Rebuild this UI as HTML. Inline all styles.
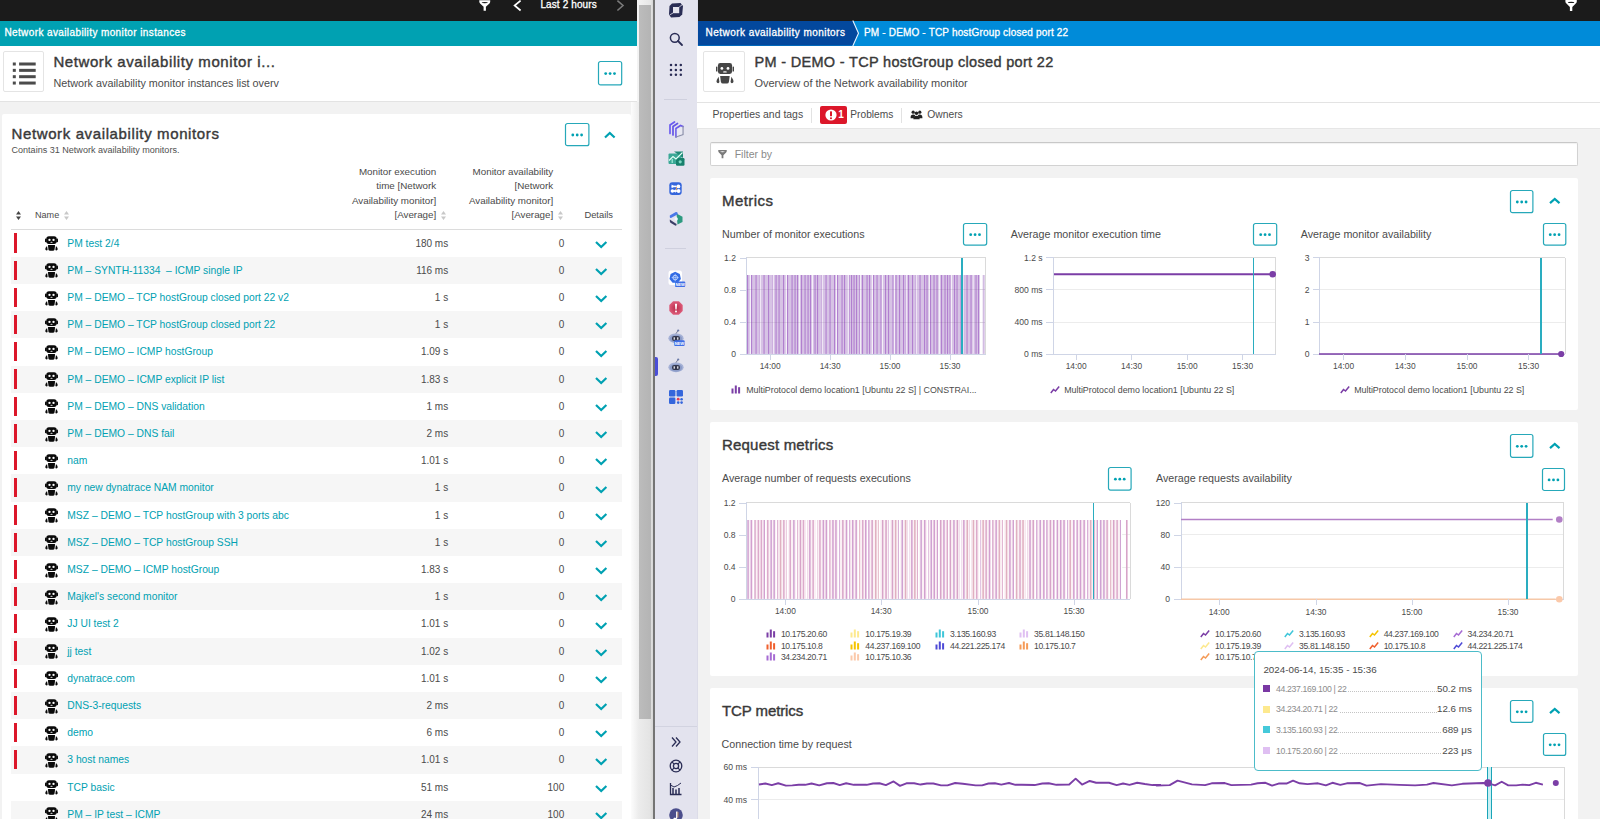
<!DOCTYPE html>
<html><head><meta charset="utf-8"><title>Network availability monitors</title>
<style>
html,body{margin:0;padding:0;}
body{width:1600px;height:819px;overflow:hidden;position:relative;background:#f2f2f2;font-family:"Liberation Sans",sans-serif;}
.t{position:absolute;white-space:nowrap;line-height:20px;height:20px;}
.r{position:absolute;display:block;}
</style></head><body>
<div class="r" style="left:0.00px;top:0.00px;width:637.00px;height:21.00px;background:#1b1b1b"></div>
<svg class="r" style="left:479.00px;top:0.00px;overflow:visible;" width="11.5" height="11" viewBox="0 0 12 11"><path d="M0.3,0 H11.7 V1.4 Q11.7,2.4 10.9,3.3 L7.2,6.9 V11 H4.8 V6.9 L1.1,3.3 Q0.3,2.4 0.3,1.4 Z" fill="#fff"/><ellipse cx="6" cy="2.4" rx="3.3" ry="0.65" fill="#1b1b1b"/></svg>
<svg class="r" style="left:512.50px;top:0.00px;overflow:visible;" width="9" height="11.5" viewBox="0 0 9 11.5"><polyline points="7.6,0.6 1.6,5.5 7.6,10.5" fill="none" stroke="#fff" stroke-width="1.7"/></svg>
<div class="t" style="left:540.40px;top:-4.80px;font-size:10px;color:#fff;font-weight:400;letter-spacing:0.12px;-webkit-text-stroke:0.3px #fff;">Last 2 hours</div>
<svg class="r" style="left:616.00px;top:0.00px;overflow:visible;" width="9" height="11.5" viewBox="0 0 9 11.5"><polyline points="1.4,0.6 7,5.5 1.4,10.5" fill="none" stroke="#7a7a7a" stroke-width="1.6"/></svg>
<div class="r" style="left:0.00px;top:21.00px;width:637.00px;height:24.50px;background:#00a1b2"></div>
<div class="t" style="left:4.40px;top:23.00px;font-size:10px;color:#fff;font-weight:400;letter-spacing:0.39px;-webkit-text-stroke:0.3px #fff;">Network availability monitor instances</div>
<div class="r" style="left:0.00px;top:45.50px;width:637.00px;height:56.00px;background:#fff"></div>
<div class="r" style="left:0.00px;top:101.20px;width:637.00px;height:1.00px;background:#e3e3e3"></div>
<div class="r" style="left:2.50px;top:51.40px;width:41.00px;height:41.10px;background:#fff;border:1px solid #e4e4e4;border-radius:2px;box-sizing:border-box"></div>
<svg class="r" style="left:2.50px;top:51.90px;overflow:visible;" width="41" height="41" viewBox="0 0 41 41"><g fill="#4b4b4b"><rect x="9.80" y="10.50" width="3" height="3"/><rect x="16.10" y="10.50" width="16.6" height="3"/><rect x="9.80" y="16.85" width="3" height="3"/><rect x="16.10" y="16.85" width="16.6" height="3"/><rect x="9.80" y="23.20" width="3" height="3"/><rect x="16.10" y="23.20" width="16.6" height="3"/><rect x="9.80" y="29.55" width="3" height="3"/><rect x="16.10" y="29.55" width="16.6" height="3"/></g></svg>
<div class="t" style="left:53.40px;top:51.60px;font-size:15px;color:#393939;font-weight:400;letter-spacing:0.59px;-webkit-text-stroke:0.4px #393939;">Network availability monitor i...</div>
<div class="t" style="left:53.40px;top:72.60px;font-size:10.8px;color:#4b4b4b;font-weight:400;">Network availability monitor instances list overv</div>
<svg class="r" style="left:598.00px;top:61.20px;overflow:visible;" width="24.2" height="24.4" viewBox="0 0 24.2 24.4"><rect x="0.5" y="0.5" width="23.20" height="23.40" rx="2" fill="#fff" stroke="#26a8b9" stroke-width="1.2"/><circle cx="7.70" cy="12.60" r="1.4" fill="#00a1b2"/><circle cx="12.10" cy="12.60" r="1.4" fill="#00a1b2"/><circle cx="16.50" cy="12.60" r="1.4" fill="#00a1b2"/></svg>
<div class="r" style="left:2.00px;top:114.00px;width:629.30px;height:716.00px;background:#fff;border-radius:2px"></div>
<div class="t" style="left:11.50px;top:124.00px;font-size:15px;color:#393939;font-weight:400;letter-spacing:0.62px;-webkit-text-stroke:0.4px #393939;">Network availability monitors</div>
<div class="t" style="left:11.50px;top:139.90px;font-size:9.05px;color:#505050;font-weight:400;">Contains 31 Network availability monitors.</div>
<svg class="r" style="left:565.20px;top:123.40px;overflow:visible;" width="24.4" height="23.2" viewBox="0 0 24.4 23.2"><rect x="0.5" y="0.5" width="23.40" height="22.20" rx="2" fill="#fff" stroke="#26a8b9" stroke-width="1.2"/><circle cx="7.80" cy="12.00" r="1.4" fill="#00a1b2"/><circle cx="12.20" cy="12.00" r="1.4" fill="#00a1b2"/><circle cx="16.60" cy="12.00" r="1.4" fill="#00a1b2"/></svg>
<svg class="r" style="left:604.00px;top:132.00px;overflow:visible;" width="11.6" height="6.5" viewBox="0 0 11.6 6.5"><polyline points="1,5.5 5.8,1 10.6,5.5" fill="none" stroke="#00a1b2" stroke-width="2.2" /></svg>
<div class="t" style="right:1163.80px;text-align:right;top:162.00px;font-size:9.8px;color:#4a4a4a;font-weight:400;">Monitor execution</div>
<div class="t" style="right:1163.80px;text-align:right;top:176.27px;font-size:9.8px;color:#4a4a4a;font-weight:400;">time [Network</div>
<div class="t" style="right:1163.80px;text-align:right;top:190.54px;font-size:9.8px;color:#4a4a4a;font-weight:400;">Availability monitor]</div>
<div class="t" style="right:1163.80px;text-align:right;top:204.81px;font-size:9.8px;color:#4a4a4a;font-weight:400;">[Average]</div>
<div class="t" style="right:1046.80px;text-align:right;top:162.00px;font-size:9.8px;color:#4a4a4a;font-weight:400;">Monitor availability</div>
<div class="t" style="right:1046.80px;text-align:right;top:176.27px;font-size:9.8px;color:#4a4a4a;font-weight:400;">[Network</div>
<div class="t" style="right:1046.80px;text-align:right;top:190.54px;font-size:9.8px;color:#4a4a4a;font-weight:400;">Availability monitor]</div>
<div class="t" style="right:1046.80px;text-align:right;top:204.81px;font-size:9.8px;color:#4a4a4a;font-weight:400;">[Average]</div>
<div class="t" style="left:584.40px;top:204.80px;font-size:9.4px;color:#4a4a4a;font-weight:400;">Details</div>
<div class="t" style="left:35.00px;top:204.80px;font-size:9.1px;color:#4a4a4a;font-weight:400;">Name</div>
<svg class="r" style="left:16.00px;top:210.50px;overflow:visible;" width="5" height="9" viewBox="0 0 5 9"><path d="M0,3.6 L2.5,0 L5,3.6 Z M0,5.4 L2.5,9 L5,5.4 Z" fill="#454545"/></svg>
<svg class="r" style="left:64.20px;top:210.50px;overflow:visible;" width="5" height="9" viewBox="0 0 5 9"><path d="M0,3.6 L2.5,0 L5,3.6 Z M0,5.4 L2.5,9 L5,5.4 Z" fill="#c8c8c8"/></svg>
<svg class="r" style="left:441.00px;top:210.50px;overflow:visible;" width="5" height="9" viewBox="0 0 5 9"><path d="M0,3.6 L2.5,0 L5,3.6 Z M0,5.4 L2.5,9 L5,5.4 Z" fill="#c8c8c8"/></svg>
<svg class="r" style="left:557.80px;top:210.50px;overflow:visible;" width="5" height="9" viewBox="0 0 5 9"><path d="M0,3.6 L2.5,0 L5,3.6 Z M0,5.4 L2.5,9 L5,5.4 Z" fill="#c8c8c8"/></svg>
<div class="r" style="left:11.00px;top:228.60px;width:610.70px;height:1.00px;background:#dcdcdc"></div>
<div class="r" style="left:14.00px;top:233.40px;width:3.00px;height:19.20px;background:#dc172a"></div>
<svg class="r" style="left:45.10px;top:236.10px;overflow:visible;" width="13" height="15" viewBox="0 0 18 20"><g fill="#0a0a0a"><rect x="1.8" y="0" width="14.4" height="10.6" rx="3.6"/><rect x="0" y="3" width="2.4" height="5.4" rx="1.1"/><rect x="15.6" y="3" width="2.4" height="5.4" rx="1.1"/><circle cx="6.2" cy="5" r="1.6" fill="#fff"/><circle cx="11.8" cy="5" r="1.6" fill="#fff"/><ellipse cx="9" cy="8.3" rx="1.9" ry="0.6" fill="#fff"/><path d="M4.6,12.2 H13.4 Q14,12.2 13.9,13 L13.2,18.2 Q12.9,20 11,20 H7 Q5.1,20 4.8,18.2 L4.1,13 Q4,12.2 4.6,12.2 Z"/><path d="M2.8,13.4 Q0.2,16.2 0.4,18 Q0.7,19.6 2.2,19.6 Q3.6,19.6 3.6,18.2 Z"/><path d="M15.2,13.4 Q17.8,16.2 17.6,18 Q17.3,19.6 15.8,19.6 Q14.4,19.6 14.4,18.2 Z"/></g></svg>
<div class="t" style="left:67.30px;top:233.60px;font-size:10.3px;color:#00a1b2;font-weight:400;">PM test 2/4</div>
<div class="t" style="right:1151.80px;text-align:right;top:233.60px;font-size:10px;color:#4b4b4b;font-weight:400;">180 ms</div>
<div class="t" style="right:1035.80px;text-align:right;top:233.60px;font-size:10px;color:#4b4b4b;font-weight:400;">0</div>
<svg class="r" style="left:594.60px;top:240.70px;overflow:visible;" width="12.4" height="7.5" viewBox="0 0 12.4 7.5"><polyline points="1,1 6.2,6 11.4,1" fill="none" stroke="#00a1b2" stroke-width="2.2" /></svg>
<div class="r" style="left:11.00px;top:256.80px;width:610.70px;height:27.20px;background:#f6f6f6"></div>
<div class="r" style="left:14.00px;top:260.60px;width:3.00px;height:19.20px;background:#dc172a"></div>
<svg class="r" style="left:45.10px;top:263.30px;overflow:visible;" width="13" height="15" viewBox="0 0 18 20"><g fill="#0a0a0a"><rect x="1.8" y="0" width="14.4" height="10.6" rx="3.6"/><rect x="0" y="3" width="2.4" height="5.4" rx="1.1"/><rect x="15.6" y="3" width="2.4" height="5.4" rx="1.1"/><circle cx="6.2" cy="5" r="1.6" fill="#fff"/><circle cx="11.8" cy="5" r="1.6" fill="#fff"/><ellipse cx="9" cy="8.3" rx="1.9" ry="0.6" fill="#fff"/><path d="M4.6,12.2 H13.4 Q14,12.2 13.9,13 L13.2,18.2 Q12.9,20 11,20 H7 Q5.1,20 4.8,18.2 L4.1,13 Q4,12.2 4.6,12.2 Z"/><path d="M2.8,13.4 Q0.2,16.2 0.4,18 Q0.7,19.6 2.2,19.6 Q3.6,19.6 3.6,18.2 Z"/><path d="M15.2,13.4 Q17.8,16.2 17.6,18 Q17.3,19.6 15.8,19.6 Q14.4,19.6 14.4,18.2 Z"/></g></svg>
<div class="t" style="left:67.30px;top:260.80px;font-size:10.3px;color:#00a1b2;font-weight:400;">PM – SYNTH-11334 &nbsp;– ICMP single IP</div>
<div class="t" style="right:1151.80px;text-align:right;top:260.80px;font-size:10px;color:#4b4b4b;font-weight:400;">116 ms</div>
<div class="t" style="right:1035.80px;text-align:right;top:260.80px;font-size:10px;color:#4b4b4b;font-weight:400;">0</div>
<svg class="r" style="left:594.60px;top:267.90px;overflow:visible;" width="12.4" height="7.5" viewBox="0 0 12.4 7.5"><polyline points="1,1 6.2,6 11.4,1" fill="none" stroke="#00a1b2" stroke-width="2.2" /></svg>
<div class="r" style="left:14.00px;top:287.80px;width:3.00px;height:19.20px;background:#dc172a"></div>
<svg class="r" style="left:45.10px;top:290.50px;overflow:visible;" width="13" height="15" viewBox="0 0 18 20"><g fill="#0a0a0a"><rect x="1.8" y="0" width="14.4" height="10.6" rx="3.6"/><rect x="0" y="3" width="2.4" height="5.4" rx="1.1"/><rect x="15.6" y="3" width="2.4" height="5.4" rx="1.1"/><circle cx="6.2" cy="5" r="1.6" fill="#fff"/><circle cx="11.8" cy="5" r="1.6" fill="#fff"/><ellipse cx="9" cy="8.3" rx="1.9" ry="0.6" fill="#fff"/><path d="M4.6,12.2 H13.4 Q14,12.2 13.9,13 L13.2,18.2 Q12.9,20 11,20 H7 Q5.1,20 4.8,18.2 L4.1,13 Q4,12.2 4.6,12.2 Z"/><path d="M2.8,13.4 Q0.2,16.2 0.4,18 Q0.7,19.6 2.2,19.6 Q3.6,19.6 3.6,18.2 Z"/><path d="M15.2,13.4 Q17.8,16.2 17.6,18 Q17.3,19.6 15.8,19.6 Q14.4,19.6 14.4,18.2 Z"/></g></svg>
<div class="t" style="left:67.30px;top:288.00px;font-size:10.3px;color:#00a1b2;font-weight:400;">PM – DEMO – TCP hostGroup closed port 22 v2</div>
<div class="t" style="right:1151.80px;text-align:right;top:288.00px;font-size:10px;color:#4b4b4b;font-weight:400;">1 s</div>
<div class="t" style="right:1035.80px;text-align:right;top:288.00px;font-size:10px;color:#4b4b4b;font-weight:400;">0</div>
<svg class="r" style="left:594.60px;top:295.10px;overflow:visible;" width="12.4" height="7.5" viewBox="0 0 12.4 7.5"><polyline points="1,1 6.2,6 11.4,1" fill="none" stroke="#00a1b2" stroke-width="2.2" /></svg>
<div class="r" style="left:11.00px;top:311.20px;width:610.70px;height:27.20px;background:#f6f6f6"></div>
<div class="r" style="left:14.00px;top:315.00px;width:3.00px;height:19.20px;background:#dc172a"></div>
<svg class="r" style="left:45.10px;top:317.70px;overflow:visible;" width="13" height="15" viewBox="0 0 18 20"><g fill="#0a0a0a"><rect x="1.8" y="0" width="14.4" height="10.6" rx="3.6"/><rect x="0" y="3" width="2.4" height="5.4" rx="1.1"/><rect x="15.6" y="3" width="2.4" height="5.4" rx="1.1"/><circle cx="6.2" cy="5" r="1.6" fill="#fff"/><circle cx="11.8" cy="5" r="1.6" fill="#fff"/><ellipse cx="9" cy="8.3" rx="1.9" ry="0.6" fill="#fff"/><path d="M4.6,12.2 H13.4 Q14,12.2 13.9,13 L13.2,18.2 Q12.9,20 11,20 H7 Q5.1,20 4.8,18.2 L4.1,13 Q4,12.2 4.6,12.2 Z"/><path d="M2.8,13.4 Q0.2,16.2 0.4,18 Q0.7,19.6 2.2,19.6 Q3.6,19.6 3.6,18.2 Z"/><path d="M15.2,13.4 Q17.8,16.2 17.6,18 Q17.3,19.6 15.8,19.6 Q14.4,19.6 14.4,18.2 Z"/></g></svg>
<div class="t" style="left:67.30px;top:315.20px;font-size:10.3px;color:#00a1b2;font-weight:400;">PM – DEMO – TCP hostGroup closed port 22</div>
<div class="t" style="right:1151.80px;text-align:right;top:315.20px;font-size:10px;color:#4b4b4b;font-weight:400;">1 s</div>
<div class="t" style="right:1035.80px;text-align:right;top:315.20px;font-size:10px;color:#4b4b4b;font-weight:400;">0</div>
<svg class="r" style="left:594.60px;top:322.30px;overflow:visible;" width="12.4" height="7.5" viewBox="0 0 12.4 7.5"><polyline points="1,1 6.2,6 11.4,1" fill="none" stroke="#00a1b2" stroke-width="2.2" /></svg>
<div class="r" style="left:14.00px;top:342.20px;width:3.00px;height:19.20px;background:#dc172a"></div>
<svg class="r" style="left:45.10px;top:344.90px;overflow:visible;" width="13" height="15" viewBox="0 0 18 20"><g fill="#0a0a0a"><rect x="1.8" y="0" width="14.4" height="10.6" rx="3.6"/><rect x="0" y="3" width="2.4" height="5.4" rx="1.1"/><rect x="15.6" y="3" width="2.4" height="5.4" rx="1.1"/><circle cx="6.2" cy="5" r="1.6" fill="#fff"/><circle cx="11.8" cy="5" r="1.6" fill="#fff"/><ellipse cx="9" cy="8.3" rx="1.9" ry="0.6" fill="#fff"/><path d="M4.6,12.2 H13.4 Q14,12.2 13.9,13 L13.2,18.2 Q12.9,20 11,20 H7 Q5.1,20 4.8,18.2 L4.1,13 Q4,12.2 4.6,12.2 Z"/><path d="M2.8,13.4 Q0.2,16.2 0.4,18 Q0.7,19.6 2.2,19.6 Q3.6,19.6 3.6,18.2 Z"/><path d="M15.2,13.4 Q17.8,16.2 17.6,18 Q17.3,19.6 15.8,19.6 Q14.4,19.6 14.4,18.2 Z"/></g></svg>
<div class="t" style="left:67.30px;top:342.40px;font-size:10.3px;color:#00a1b2;font-weight:400;">PM – DEMO – ICMP hostGroup</div>
<div class="t" style="right:1151.80px;text-align:right;top:342.40px;font-size:10px;color:#4b4b4b;font-weight:400;">1.09 s</div>
<div class="t" style="right:1035.80px;text-align:right;top:342.40px;font-size:10px;color:#4b4b4b;font-weight:400;">0</div>
<svg class="r" style="left:594.60px;top:349.50px;overflow:visible;" width="12.4" height="7.5" viewBox="0 0 12.4 7.5"><polyline points="1,1 6.2,6 11.4,1" fill="none" stroke="#00a1b2" stroke-width="2.2" /></svg>
<div class="r" style="left:11.00px;top:365.60px;width:610.70px;height:27.20px;background:#f6f6f6"></div>
<div class="r" style="left:14.00px;top:369.40px;width:3.00px;height:19.20px;background:#dc172a"></div>
<svg class="r" style="left:45.10px;top:372.10px;overflow:visible;" width="13" height="15" viewBox="0 0 18 20"><g fill="#0a0a0a"><rect x="1.8" y="0" width="14.4" height="10.6" rx="3.6"/><rect x="0" y="3" width="2.4" height="5.4" rx="1.1"/><rect x="15.6" y="3" width="2.4" height="5.4" rx="1.1"/><circle cx="6.2" cy="5" r="1.6" fill="#fff"/><circle cx="11.8" cy="5" r="1.6" fill="#fff"/><ellipse cx="9" cy="8.3" rx="1.9" ry="0.6" fill="#fff"/><path d="M4.6,12.2 H13.4 Q14,12.2 13.9,13 L13.2,18.2 Q12.9,20 11,20 H7 Q5.1,20 4.8,18.2 L4.1,13 Q4,12.2 4.6,12.2 Z"/><path d="M2.8,13.4 Q0.2,16.2 0.4,18 Q0.7,19.6 2.2,19.6 Q3.6,19.6 3.6,18.2 Z"/><path d="M15.2,13.4 Q17.8,16.2 17.6,18 Q17.3,19.6 15.8,19.6 Q14.4,19.6 14.4,18.2 Z"/></g></svg>
<div class="t" style="left:67.30px;top:369.60px;font-size:10.3px;color:#00a1b2;font-weight:400;">PM – DEMO – ICMP explicit IP list</div>
<div class="t" style="right:1151.80px;text-align:right;top:369.60px;font-size:10px;color:#4b4b4b;font-weight:400;">1.83 s</div>
<div class="t" style="right:1035.80px;text-align:right;top:369.60px;font-size:10px;color:#4b4b4b;font-weight:400;">0</div>
<svg class="r" style="left:594.60px;top:376.70px;overflow:visible;" width="12.4" height="7.5" viewBox="0 0 12.4 7.5"><polyline points="1,1 6.2,6 11.4,1" fill="none" stroke="#00a1b2" stroke-width="2.2" /></svg>
<div class="r" style="left:14.00px;top:396.60px;width:3.00px;height:19.20px;background:#dc172a"></div>
<svg class="r" style="left:45.10px;top:399.30px;overflow:visible;" width="13" height="15" viewBox="0 0 18 20"><g fill="#0a0a0a"><rect x="1.8" y="0" width="14.4" height="10.6" rx="3.6"/><rect x="0" y="3" width="2.4" height="5.4" rx="1.1"/><rect x="15.6" y="3" width="2.4" height="5.4" rx="1.1"/><circle cx="6.2" cy="5" r="1.6" fill="#fff"/><circle cx="11.8" cy="5" r="1.6" fill="#fff"/><ellipse cx="9" cy="8.3" rx="1.9" ry="0.6" fill="#fff"/><path d="M4.6,12.2 H13.4 Q14,12.2 13.9,13 L13.2,18.2 Q12.9,20 11,20 H7 Q5.1,20 4.8,18.2 L4.1,13 Q4,12.2 4.6,12.2 Z"/><path d="M2.8,13.4 Q0.2,16.2 0.4,18 Q0.7,19.6 2.2,19.6 Q3.6,19.6 3.6,18.2 Z"/><path d="M15.2,13.4 Q17.8,16.2 17.6,18 Q17.3,19.6 15.8,19.6 Q14.4,19.6 14.4,18.2 Z"/></g></svg>
<div class="t" style="left:67.30px;top:396.80px;font-size:10.3px;color:#00a1b2;font-weight:400;">PM – DEMO – DNS validation</div>
<div class="t" style="right:1151.80px;text-align:right;top:396.80px;font-size:10px;color:#4b4b4b;font-weight:400;">1 ms</div>
<div class="t" style="right:1035.80px;text-align:right;top:396.80px;font-size:10px;color:#4b4b4b;font-weight:400;">0</div>
<svg class="r" style="left:594.60px;top:403.90px;overflow:visible;" width="12.4" height="7.5" viewBox="0 0 12.4 7.5"><polyline points="1,1 6.2,6 11.4,1" fill="none" stroke="#00a1b2" stroke-width="2.2" /></svg>
<div class="r" style="left:11.00px;top:420.00px;width:610.70px;height:27.20px;background:#f6f6f6"></div>
<div class="r" style="left:14.00px;top:423.80px;width:3.00px;height:19.20px;background:#dc172a"></div>
<svg class="r" style="left:45.10px;top:426.50px;overflow:visible;" width="13" height="15" viewBox="0 0 18 20"><g fill="#0a0a0a"><rect x="1.8" y="0" width="14.4" height="10.6" rx="3.6"/><rect x="0" y="3" width="2.4" height="5.4" rx="1.1"/><rect x="15.6" y="3" width="2.4" height="5.4" rx="1.1"/><circle cx="6.2" cy="5" r="1.6" fill="#fff"/><circle cx="11.8" cy="5" r="1.6" fill="#fff"/><ellipse cx="9" cy="8.3" rx="1.9" ry="0.6" fill="#fff"/><path d="M4.6,12.2 H13.4 Q14,12.2 13.9,13 L13.2,18.2 Q12.9,20 11,20 H7 Q5.1,20 4.8,18.2 L4.1,13 Q4,12.2 4.6,12.2 Z"/><path d="M2.8,13.4 Q0.2,16.2 0.4,18 Q0.7,19.6 2.2,19.6 Q3.6,19.6 3.6,18.2 Z"/><path d="M15.2,13.4 Q17.8,16.2 17.6,18 Q17.3,19.6 15.8,19.6 Q14.4,19.6 14.4,18.2 Z"/></g></svg>
<div class="t" style="left:67.30px;top:424.00px;font-size:10.3px;color:#00a1b2;font-weight:400;">PM – DEMO – DNS fail</div>
<div class="t" style="right:1151.80px;text-align:right;top:424.00px;font-size:10px;color:#4b4b4b;font-weight:400;">2 ms</div>
<div class="t" style="right:1035.80px;text-align:right;top:424.00px;font-size:10px;color:#4b4b4b;font-weight:400;">0</div>
<svg class="r" style="left:594.60px;top:431.10px;overflow:visible;" width="12.4" height="7.5" viewBox="0 0 12.4 7.5"><polyline points="1,1 6.2,6 11.4,1" fill="none" stroke="#00a1b2" stroke-width="2.2" /></svg>
<div class="r" style="left:14.00px;top:451.00px;width:3.00px;height:19.20px;background:#dc172a"></div>
<svg class="r" style="left:45.10px;top:453.70px;overflow:visible;" width="13" height="15" viewBox="0 0 18 20"><g fill="#0a0a0a"><rect x="1.8" y="0" width="14.4" height="10.6" rx="3.6"/><rect x="0" y="3" width="2.4" height="5.4" rx="1.1"/><rect x="15.6" y="3" width="2.4" height="5.4" rx="1.1"/><circle cx="6.2" cy="5" r="1.6" fill="#fff"/><circle cx="11.8" cy="5" r="1.6" fill="#fff"/><ellipse cx="9" cy="8.3" rx="1.9" ry="0.6" fill="#fff"/><path d="M4.6,12.2 H13.4 Q14,12.2 13.9,13 L13.2,18.2 Q12.9,20 11,20 H7 Q5.1,20 4.8,18.2 L4.1,13 Q4,12.2 4.6,12.2 Z"/><path d="M2.8,13.4 Q0.2,16.2 0.4,18 Q0.7,19.6 2.2,19.6 Q3.6,19.6 3.6,18.2 Z"/><path d="M15.2,13.4 Q17.8,16.2 17.6,18 Q17.3,19.6 15.8,19.6 Q14.4,19.6 14.4,18.2 Z"/></g></svg>
<div class="t" style="left:67.30px;top:451.20px;font-size:10.3px;color:#00a1b2;font-weight:400;">nam</div>
<div class="t" style="right:1151.80px;text-align:right;top:451.20px;font-size:10px;color:#4b4b4b;font-weight:400;">1.01 s</div>
<div class="t" style="right:1035.80px;text-align:right;top:451.20px;font-size:10px;color:#4b4b4b;font-weight:400;">0</div>
<svg class="r" style="left:594.60px;top:458.30px;overflow:visible;" width="12.4" height="7.5" viewBox="0 0 12.4 7.5"><polyline points="1,1 6.2,6 11.4,1" fill="none" stroke="#00a1b2" stroke-width="2.2" /></svg>
<div class="r" style="left:11.00px;top:474.40px;width:610.70px;height:27.20px;background:#f6f6f6"></div>
<div class="r" style="left:14.00px;top:478.20px;width:3.00px;height:19.20px;background:#dc172a"></div>
<svg class="r" style="left:45.10px;top:480.90px;overflow:visible;" width="13" height="15" viewBox="0 0 18 20"><g fill="#0a0a0a"><rect x="1.8" y="0" width="14.4" height="10.6" rx="3.6"/><rect x="0" y="3" width="2.4" height="5.4" rx="1.1"/><rect x="15.6" y="3" width="2.4" height="5.4" rx="1.1"/><circle cx="6.2" cy="5" r="1.6" fill="#fff"/><circle cx="11.8" cy="5" r="1.6" fill="#fff"/><ellipse cx="9" cy="8.3" rx="1.9" ry="0.6" fill="#fff"/><path d="M4.6,12.2 H13.4 Q14,12.2 13.9,13 L13.2,18.2 Q12.9,20 11,20 H7 Q5.1,20 4.8,18.2 L4.1,13 Q4,12.2 4.6,12.2 Z"/><path d="M2.8,13.4 Q0.2,16.2 0.4,18 Q0.7,19.6 2.2,19.6 Q3.6,19.6 3.6,18.2 Z"/><path d="M15.2,13.4 Q17.8,16.2 17.6,18 Q17.3,19.6 15.8,19.6 Q14.4,19.6 14.4,18.2 Z"/></g></svg>
<div class="t" style="left:67.30px;top:478.40px;font-size:10.3px;color:#00a1b2;font-weight:400;">my new dynatrace NAM monitor</div>
<div class="t" style="right:1151.80px;text-align:right;top:478.40px;font-size:10px;color:#4b4b4b;font-weight:400;">1 s</div>
<div class="t" style="right:1035.80px;text-align:right;top:478.40px;font-size:10px;color:#4b4b4b;font-weight:400;">0</div>
<svg class="r" style="left:594.60px;top:485.50px;overflow:visible;" width="12.4" height="7.5" viewBox="0 0 12.4 7.5"><polyline points="1,1 6.2,6 11.4,1" fill="none" stroke="#00a1b2" stroke-width="2.2" /></svg>
<div class="r" style="left:14.00px;top:505.40px;width:3.00px;height:19.20px;background:#dc172a"></div>
<svg class="r" style="left:45.10px;top:508.10px;overflow:visible;" width="13" height="15" viewBox="0 0 18 20"><g fill="#0a0a0a"><rect x="1.8" y="0" width="14.4" height="10.6" rx="3.6"/><rect x="0" y="3" width="2.4" height="5.4" rx="1.1"/><rect x="15.6" y="3" width="2.4" height="5.4" rx="1.1"/><circle cx="6.2" cy="5" r="1.6" fill="#fff"/><circle cx="11.8" cy="5" r="1.6" fill="#fff"/><ellipse cx="9" cy="8.3" rx="1.9" ry="0.6" fill="#fff"/><path d="M4.6,12.2 H13.4 Q14,12.2 13.9,13 L13.2,18.2 Q12.9,20 11,20 H7 Q5.1,20 4.8,18.2 L4.1,13 Q4,12.2 4.6,12.2 Z"/><path d="M2.8,13.4 Q0.2,16.2 0.4,18 Q0.7,19.6 2.2,19.6 Q3.6,19.6 3.6,18.2 Z"/><path d="M15.2,13.4 Q17.8,16.2 17.6,18 Q17.3,19.6 15.8,19.6 Q14.4,19.6 14.4,18.2 Z"/></g></svg>
<div class="t" style="left:67.30px;top:505.60px;font-size:10.3px;color:#00a1b2;font-weight:400;">MSZ – DEMO – TCP hostGroup with 3 ports abc</div>
<div class="t" style="right:1151.80px;text-align:right;top:505.60px;font-size:10px;color:#4b4b4b;font-weight:400;">1 s</div>
<div class="t" style="right:1035.80px;text-align:right;top:505.60px;font-size:10px;color:#4b4b4b;font-weight:400;">0</div>
<svg class="r" style="left:594.60px;top:512.70px;overflow:visible;" width="12.4" height="7.5" viewBox="0 0 12.4 7.5"><polyline points="1,1 6.2,6 11.4,1" fill="none" stroke="#00a1b2" stroke-width="2.2" /></svg>
<div class="r" style="left:11.00px;top:528.80px;width:610.70px;height:27.20px;background:#f6f6f6"></div>
<div class="r" style="left:14.00px;top:532.60px;width:3.00px;height:19.20px;background:#dc172a"></div>
<svg class="r" style="left:45.10px;top:535.30px;overflow:visible;" width="13" height="15" viewBox="0 0 18 20"><g fill="#0a0a0a"><rect x="1.8" y="0" width="14.4" height="10.6" rx="3.6"/><rect x="0" y="3" width="2.4" height="5.4" rx="1.1"/><rect x="15.6" y="3" width="2.4" height="5.4" rx="1.1"/><circle cx="6.2" cy="5" r="1.6" fill="#fff"/><circle cx="11.8" cy="5" r="1.6" fill="#fff"/><ellipse cx="9" cy="8.3" rx="1.9" ry="0.6" fill="#fff"/><path d="M4.6,12.2 H13.4 Q14,12.2 13.9,13 L13.2,18.2 Q12.9,20 11,20 H7 Q5.1,20 4.8,18.2 L4.1,13 Q4,12.2 4.6,12.2 Z"/><path d="M2.8,13.4 Q0.2,16.2 0.4,18 Q0.7,19.6 2.2,19.6 Q3.6,19.6 3.6,18.2 Z"/><path d="M15.2,13.4 Q17.8,16.2 17.6,18 Q17.3,19.6 15.8,19.6 Q14.4,19.6 14.4,18.2 Z"/></g></svg>
<div class="t" style="left:67.30px;top:532.80px;font-size:10.3px;color:#00a1b2;font-weight:400;">MSZ – DEMO – TCP hostGroup SSH</div>
<div class="t" style="right:1151.80px;text-align:right;top:532.80px;font-size:10px;color:#4b4b4b;font-weight:400;">1 s</div>
<div class="t" style="right:1035.80px;text-align:right;top:532.80px;font-size:10px;color:#4b4b4b;font-weight:400;">0</div>
<svg class="r" style="left:594.60px;top:539.90px;overflow:visible;" width="12.4" height="7.5" viewBox="0 0 12.4 7.5"><polyline points="1,1 6.2,6 11.4,1" fill="none" stroke="#00a1b2" stroke-width="2.2" /></svg>
<div class="r" style="left:14.00px;top:559.80px;width:3.00px;height:19.20px;background:#dc172a"></div>
<svg class="r" style="left:45.10px;top:562.50px;overflow:visible;" width="13" height="15" viewBox="0 0 18 20"><g fill="#0a0a0a"><rect x="1.8" y="0" width="14.4" height="10.6" rx="3.6"/><rect x="0" y="3" width="2.4" height="5.4" rx="1.1"/><rect x="15.6" y="3" width="2.4" height="5.4" rx="1.1"/><circle cx="6.2" cy="5" r="1.6" fill="#fff"/><circle cx="11.8" cy="5" r="1.6" fill="#fff"/><ellipse cx="9" cy="8.3" rx="1.9" ry="0.6" fill="#fff"/><path d="M4.6,12.2 H13.4 Q14,12.2 13.9,13 L13.2,18.2 Q12.9,20 11,20 H7 Q5.1,20 4.8,18.2 L4.1,13 Q4,12.2 4.6,12.2 Z"/><path d="M2.8,13.4 Q0.2,16.2 0.4,18 Q0.7,19.6 2.2,19.6 Q3.6,19.6 3.6,18.2 Z"/><path d="M15.2,13.4 Q17.8,16.2 17.6,18 Q17.3,19.6 15.8,19.6 Q14.4,19.6 14.4,18.2 Z"/></g></svg>
<div class="t" style="left:67.30px;top:560.00px;font-size:10.3px;color:#00a1b2;font-weight:400;">MSZ – DEMO – ICMP hostGroup</div>
<div class="t" style="right:1151.80px;text-align:right;top:560.00px;font-size:10px;color:#4b4b4b;font-weight:400;">1.83 s</div>
<div class="t" style="right:1035.80px;text-align:right;top:560.00px;font-size:10px;color:#4b4b4b;font-weight:400;">0</div>
<svg class="r" style="left:594.60px;top:567.10px;overflow:visible;" width="12.4" height="7.5" viewBox="0 0 12.4 7.5"><polyline points="1,1 6.2,6 11.4,1" fill="none" stroke="#00a1b2" stroke-width="2.2" /></svg>
<div class="r" style="left:11.00px;top:583.20px;width:610.70px;height:27.20px;background:#f6f6f6"></div>
<div class="r" style="left:14.00px;top:587.00px;width:3.00px;height:19.20px;background:#dc172a"></div>
<svg class="r" style="left:45.10px;top:589.70px;overflow:visible;" width="13" height="15" viewBox="0 0 18 20"><g fill="#0a0a0a"><rect x="1.8" y="0" width="14.4" height="10.6" rx="3.6"/><rect x="0" y="3" width="2.4" height="5.4" rx="1.1"/><rect x="15.6" y="3" width="2.4" height="5.4" rx="1.1"/><circle cx="6.2" cy="5" r="1.6" fill="#fff"/><circle cx="11.8" cy="5" r="1.6" fill="#fff"/><ellipse cx="9" cy="8.3" rx="1.9" ry="0.6" fill="#fff"/><path d="M4.6,12.2 H13.4 Q14,12.2 13.9,13 L13.2,18.2 Q12.9,20 11,20 H7 Q5.1,20 4.8,18.2 L4.1,13 Q4,12.2 4.6,12.2 Z"/><path d="M2.8,13.4 Q0.2,16.2 0.4,18 Q0.7,19.6 2.2,19.6 Q3.6,19.6 3.6,18.2 Z"/><path d="M15.2,13.4 Q17.8,16.2 17.6,18 Q17.3,19.6 15.8,19.6 Q14.4,19.6 14.4,18.2 Z"/></g></svg>
<div class="t" style="left:67.30px;top:587.20px;font-size:10.3px;color:#00a1b2;font-weight:400;">Majkel's second monitor</div>
<div class="t" style="right:1151.80px;text-align:right;top:587.20px;font-size:10px;color:#4b4b4b;font-weight:400;">1 s</div>
<div class="t" style="right:1035.80px;text-align:right;top:587.20px;font-size:10px;color:#4b4b4b;font-weight:400;">0</div>
<svg class="r" style="left:594.60px;top:594.30px;overflow:visible;" width="12.4" height="7.5" viewBox="0 0 12.4 7.5"><polyline points="1,1 6.2,6 11.4,1" fill="none" stroke="#00a1b2" stroke-width="2.2" /></svg>
<div class="r" style="left:14.00px;top:614.20px;width:3.00px;height:19.20px;background:#dc172a"></div>
<svg class="r" style="left:45.10px;top:616.90px;overflow:visible;" width="13" height="15" viewBox="0 0 18 20"><g fill="#0a0a0a"><rect x="1.8" y="0" width="14.4" height="10.6" rx="3.6"/><rect x="0" y="3" width="2.4" height="5.4" rx="1.1"/><rect x="15.6" y="3" width="2.4" height="5.4" rx="1.1"/><circle cx="6.2" cy="5" r="1.6" fill="#fff"/><circle cx="11.8" cy="5" r="1.6" fill="#fff"/><ellipse cx="9" cy="8.3" rx="1.9" ry="0.6" fill="#fff"/><path d="M4.6,12.2 H13.4 Q14,12.2 13.9,13 L13.2,18.2 Q12.9,20 11,20 H7 Q5.1,20 4.8,18.2 L4.1,13 Q4,12.2 4.6,12.2 Z"/><path d="M2.8,13.4 Q0.2,16.2 0.4,18 Q0.7,19.6 2.2,19.6 Q3.6,19.6 3.6,18.2 Z"/><path d="M15.2,13.4 Q17.8,16.2 17.6,18 Q17.3,19.6 15.8,19.6 Q14.4,19.6 14.4,18.2 Z"/></g></svg>
<div class="t" style="left:67.30px;top:614.40px;font-size:10.3px;color:#00a1b2;font-weight:400;">JJ UI test 2</div>
<div class="t" style="right:1151.80px;text-align:right;top:614.40px;font-size:10px;color:#4b4b4b;font-weight:400;">1.01 s</div>
<div class="t" style="right:1035.80px;text-align:right;top:614.40px;font-size:10px;color:#4b4b4b;font-weight:400;">0</div>
<svg class="r" style="left:594.60px;top:621.50px;overflow:visible;" width="12.4" height="7.5" viewBox="0 0 12.4 7.5"><polyline points="1,1 6.2,6 11.4,1" fill="none" stroke="#00a1b2" stroke-width="2.2" /></svg>
<div class="r" style="left:11.00px;top:637.60px;width:610.70px;height:27.20px;background:#f6f6f6"></div>
<div class="r" style="left:14.00px;top:641.40px;width:3.00px;height:19.20px;background:#dc172a"></div>
<svg class="r" style="left:45.10px;top:644.10px;overflow:visible;" width="13" height="15" viewBox="0 0 18 20"><g fill="#0a0a0a"><rect x="1.8" y="0" width="14.4" height="10.6" rx="3.6"/><rect x="0" y="3" width="2.4" height="5.4" rx="1.1"/><rect x="15.6" y="3" width="2.4" height="5.4" rx="1.1"/><circle cx="6.2" cy="5" r="1.6" fill="#fff"/><circle cx="11.8" cy="5" r="1.6" fill="#fff"/><ellipse cx="9" cy="8.3" rx="1.9" ry="0.6" fill="#fff"/><path d="M4.6,12.2 H13.4 Q14,12.2 13.9,13 L13.2,18.2 Q12.9,20 11,20 H7 Q5.1,20 4.8,18.2 L4.1,13 Q4,12.2 4.6,12.2 Z"/><path d="M2.8,13.4 Q0.2,16.2 0.4,18 Q0.7,19.6 2.2,19.6 Q3.6,19.6 3.6,18.2 Z"/><path d="M15.2,13.4 Q17.8,16.2 17.6,18 Q17.3,19.6 15.8,19.6 Q14.4,19.6 14.4,18.2 Z"/></g></svg>
<div class="t" style="left:67.30px;top:641.60px;font-size:10.3px;color:#00a1b2;font-weight:400;">jj test</div>
<div class="t" style="right:1151.80px;text-align:right;top:641.60px;font-size:10px;color:#4b4b4b;font-weight:400;">1.02 s</div>
<div class="t" style="right:1035.80px;text-align:right;top:641.60px;font-size:10px;color:#4b4b4b;font-weight:400;">0</div>
<svg class="r" style="left:594.60px;top:648.70px;overflow:visible;" width="12.4" height="7.5" viewBox="0 0 12.4 7.5"><polyline points="1,1 6.2,6 11.4,1" fill="none" stroke="#00a1b2" stroke-width="2.2" /></svg>
<div class="r" style="left:14.00px;top:668.60px;width:3.00px;height:19.20px;background:#dc172a"></div>
<svg class="r" style="left:45.10px;top:671.30px;overflow:visible;" width="13" height="15" viewBox="0 0 18 20"><g fill="#0a0a0a"><rect x="1.8" y="0" width="14.4" height="10.6" rx="3.6"/><rect x="0" y="3" width="2.4" height="5.4" rx="1.1"/><rect x="15.6" y="3" width="2.4" height="5.4" rx="1.1"/><circle cx="6.2" cy="5" r="1.6" fill="#fff"/><circle cx="11.8" cy="5" r="1.6" fill="#fff"/><ellipse cx="9" cy="8.3" rx="1.9" ry="0.6" fill="#fff"/><path d="M4.6,12.2 H13.4 Q14,12.2 13.9,13 L13.2,18.2 Q12.9,20 11,20 H7 Q5.1,20 4.8,18.2 L4.1,13 Q4,12.2 4.6,12.2 Z"/><path d="M2.8,13.4 Q0.2,16.2 0.4,18 Q0.7,19.6 2.2,19.6 Q3.6,19.6 3.6,18.2 Z"/><path d="M15.2,13.4 Q17.8,16.2 17.6,18 Q17.3,19.6 15.8,19.6 Q14.4,19.6 14.4,18.2 Z"/></g></svg>
<div class="t" style="left:67.30px;top:668.80px;font-size:10.3px;color:#00a1b2;font-weight:400;">dynatrace.com</div>
<div class="t" style="right:1151.80px;text-align:right;top:668.80px;font-size:10px;color:#4b4b4b;font-weight:400;">1.01 s</div>
<div class="t" style="right:1035.80px;text-align:right;top:668.80px;font-size:10px;color:#4b4b4b;font-weight:400;">0</div>
<svg class="r" style="left:594.60px;top:675.90px;overflow:visible;" width="12.4" height="7.5" viewBox="0 0 12.4 7.5"><polyline points="1,1 6.2,6 11.4,1" fill="none" stroke="#00a1b2" stroke-width="2.2" /></svg>
<div class="r" style="left:11.00px;top:692.00px;width:610.70px;height:27.20px;background:#f6f6f6"></div>
<div class="r" style="left:14.00px;top:695.80px;width:3.00px;height:19.20px;background:#dc172a"></div>
<svg class="r" style="left:45.10px;top:698.50px;overflow:visible;" width="13" height="15" viewBox="0 0 18 20"><g fill="#0a0a0a"><rect x="1.8" y="0" width="14.4" height="10.6" rx="3.6"/><rect x="0" y="3" width="2.4" height="5.4" rx="1.1"/><rect x="15.6" y="3" width="2.4" height="5.4" rx="1.1"/><circle cx="6.2" cy="5" r="1.6" fill="#fff"/><circle cx="11.8" cy="5" r="1.6" fill="#fff"/><ellipse cx="9" cy="8.3" rx="1.9" ry="0.6" fill="#fff"/><path d="M4.6,12.2 H13.4 Q14,12.2 13.9,13 L13.2,18.2 Q12.9,20 11,20 H7 Q5.1,20 4.8,18.2 L4.1,13 Q4,12.2 4.6,12.2 Z"/><path d="M2.8,13.4 Q0.2,16.2 0.4,18 Q0.7,19.6 2.2,19.6 Q3.6,19.6 3.6,18.2 Z"/><path d="M15.2,13.4 Q17.8,16.2 17.6,18 Q17.3,19.6 15.8,19.6 Q14.4,19.6 14.4,18.2 Z"/></g></svg>
<div class="t" style="left:67.30px;top:696.00px;font-size:10.3px;color:#00a1b2;font-weight:400;">DNS-3-requests</div>
<div class="t" style="right:1151.80px;text-align:right;top:696.00px;font-size:10px;color:#4b4b4b;font-weight:400;">2 ms</div>
<div class="t" style="right:1035.80px;text-align:right;top:696.00px;font-size:10px;color:#4b4b4b;font-weight:400;">0</div>
<svg class="r" style="left:594.60px;top:703.10px;overflow:visible;" width="12.4" height="7.5" viewBox="0 0 12.4 7.5"><polyline points="1,1 6.2,6 11.4,1" fill="none" stroke="#00a1b2" stroke-width="2.2" /></svg>
<div class="r" style="left:14.00px;top:723.00px;width:3.00px;height:19.20px;background:#dc172a"></div>
<svg class="r" style="left:45.10px;top:725.70px;overflow:visible;" width="13" height="15" viewBox="0 0 18 20"><g fill="#0a0a0a"><rect x="1.8" y="0" width="14.4" height="10.6" rx="3.6"/><rect x="0" y="3" width="2.4" height="5.4" rx="1.1"/><rect x="15.6" y="3" width="2.4" height="5.4" rx="1.1"/><circle cx="6.2" cy="5" r="1.6" fill="#fff"/><circle cx="11.8" cy="5" r="1.6" fill="#fff"/><ellipse cx="9" cy="8.3" rx="1.9" ry="0.6" fill="#fff"/><path d="M4.6,12.2 H13.4 Q14,12.2 13.9,13 L13.2,18.2 Q12.9,20 11,20 H7 Q5.1,20 4.8,18.2 L4.1,13 Q4,12.2 4.6,12.2 Z"/><path d="M2.8,13.4 Q0.2,16.2 0.4,18 Q0.7,19.6 2.2,19.6 Q3.6,19.6 3.6,18.2 Z"/><path d="M15.2,13.4 Q17.8,16.2 17.6,18 Q17.3,19.6 15.8,19.6 Q14.4,19.6 14.4,18.2 Z"/></g></svg>
<div class="t" style="left:67.30px;top:723.20px;font-size:10.3px;color:#00a1b2;font-weight:400;">demo</div>
<div class="t" style="right:1151.80px;text-align:right;top:723.20px;font-size:10px;color:#4b4b4b;font-weight:400;">6 ms</div>
<div class="t" style="right:1035.80px;text-align:right;top:723.20px;font-size:10px;color:#4b4b4b;font-weight:400;">0</div>
<svg class="r" style="left:594.60px;top:730.30px;overflow:visible;" width="12.4" height="7.5" viewBox="0 0 12.4 7.5"><polyline points="1,1 6.2,6 11.4,1" fill="none" stroke="#00a1b2" stroke-width="2.2" /></svg>
<div class="r" style="left:11.00px;top:746.40px;width:610.70px;height:27.20px;background:#f6f6f6"></div>
<div class="r" style="left:14.00px;top:750.20px;width:3.00px;height:19.20px;background:#dc172a"></div>
<svg class="r" style="left:45.10px;top:752.90px;overflow:visible;" width="13" height="15" viewBox="0 0 18 20"><g fill="#0a0a0a"><rect x="1.8" y="0" width="14.4" height="10.6" rx="3.6"/><rect x="0" y="3" width="2.4" height="5.4" rx="1.1"/><rect x="15.6" y="3" width="2.4" height="5.4" rx="1.1"/><circle cx="6.2" cy="5" r="1.6" fill="#fff"/><circle cx="11.8" cy="5" r="1.6" fill="#fff"/><ellipse cx="9" cy="8.3" rx="1.9" ry="0.6" fill="#fff"/><path d="M4.6,12.2 H13.4 Q14,12.2 13.9,13 L13.2,18.2 Q12.9,20 11,20 H7 Q5.1,20 4.8,18.2 L4.1,13 Q4,12.2 4.6,12.2 Z"/><path d="M2.8,13.4 Q0.2,16.2 0.4,18 Q0.7,19.6 2.2,19.6 Q3.6,19.6 3.6,18.2 Z"/><path d="M15.2,13.4 Q17.8,16.2 17.6,18 Q17.3,19.6 15.8,19.6 Q14.4,19.6 14.4,18.2 Z"/></g></svg>
<div class="t" style="left:67.30px;top:750.40px;font-size:10.3px;color:#00a1b2;font-weight:400;">3 host names</div>
<div class="t" style="right:1151.80px;text-align:right;top:750.40px;font-size:10px;color:#4b4b4b;font-weight:400;">1.01 s</div>
<div class="t" style="right:1035.80px;text-align:right;top:750.40px;font-size:10px;color:#4b4b4b;font-weight:400;">0</div>
<svg class="r" style="left:594.60px;top:757.50px;overflow:visible;" width="12.4" height="7.5" viewBox="0 0 12.4 7.5"><polyline points="1,1 6.2,6 11.4,1" fill="none" stroke="#00a1b2" stroke-width="2.2" /></svg>
<svg class="r" style="left:45.10px;top:780.10px;overflow:visible;" width="13" height="15" viewBox="0 0 18 20"><g fill="#0a0a0a"><rect x="1.8" y="0" width="14.4" height="10.6" rx="3.6"/><rect x="0" y="3" width="2.4" height="5.4" rx="1.1"/><rect x="15.6" y="3" width="2.4" height="5.4" rx="1.1"/><circle cx="6.2" cy="5" r="1.6" fill="#fff"/><circle cx="11.8" cy="5" r="1.6" fill="#fff"/><ellipse cx="9" cy="8.3" rx="1.9" ry="0.6" fill="#fff"/><path d="M4.6,12.2 H13.4 Q14,12.2 13.9,13 L13.2,18.2 Q12.9,20 11,20 H7 Q5.1,20 4.8,18.2 L4.1,13 Q4,12.2 4.6,12.2 Z"/><path d="M2.8,13.4 Q0.2,16.2 0.4,18 Q0.7,19.6 2.2,19.6 Q3.6,19.6 3.6,18.2 Z"/><path d="M15.2,13.4 Q17.8,16.2 17.6,18 Q17.3,19.6 15.8,19.6 Q14.4,19.6 14.4,18.2 Z"/></g></svg>
<div class="t" style="left:67.30px;top:777.60px;font-size:10.3px;color:#00a1b2;font-weight:400;">TCP basic</div>
<div class="t" style="right:1151.80px;text-align:right;top:777.60px;font-size:10px;color:#4b4b4b;font-weight:400;">51 ms</div>
<div class="t" style="right:1035.80px;text-align:right;top:777.60px;font-size:10px;color:#4b4b4b;font-weight:400;">100</div>
<svg class="r" style="left:594.60px;top:784.70px;overflow:visible;" width="12.4" height="7.5" viewBox="0 0 12.4 7.5"><polyline points="1,1 6.2,6 11.4,1" fill="none" stroke="#00a1b2" stroke-width="2.2" /></svg>
<div class="r" style="left:11.00px;top:800.80px;width:610.70px;height:27.20px;background:#f6f6f6"></div>
<svg class="r" style="left:45.10px;top:807.30px;overflow:visible;" width="13" height="15" viewBox="0 0 18 20"><g fill="#0a0a0a"><rect x="1.8" y="0" width="14.4" height="10.6" rx="3.6"/><rect x="0" y="3" width="2.4" height="5.4" rx="1.1"/><rect x="15.6" y="3" width="2.4" height="5.4" rx="1.1"/><circle cx="6.2" cy="5" r="1.6" fill="#fff"/><circle cx="11.8" cy="5" r="1.6" fill="#fff"/><ellipse cx="9" cy="8.3" rx="1.9" ry="0.6" fill="#fff"/><path d="M4.6,12.2 H13.4 Q14,12.2 13.9,13 L13.2,18.2 Q12.9,20 11,20 H7 Q5.1,20 4.8,18.2 L4.1,13 Q4,12.2 4.6,12.2 Z"/><path d="M2.8,13.4 Q0.2,16.2 0.4,18 Q0.7,19.6 2.2,19.6 Q3.6,19.6 3.6,18.2 Z"/><path d="M15.2,13.4 Q17.8,16.2 17.6,18 Q17.3,19.6 15.8,19.6 Q14.4,19.6 14.4,18.2 Z"/></g></svg>
<div class="t" style="left:67.30px;top:804.80px;font-size:10.3px;color:#00a1b2;font-weight:400;">PM – IP test – ICMP</div>
<div class="t" style="right:1151.80px;text-align:right;top:804.80px;font-size:10px;color:#4b4b4b;font-weight:400;">24 ms</div>
<div class="t" style="right:1035.80px;text-align:right;top:804.80px;font-size:10px;color:#4b4b4b;font-weight:400;">100</div>
<svg class="r" style="left:594.60px;top:811.90px;overflow:visible;" width="12.4" height="7.5" viewBox="0 0 12.4 7.5"><polyline points="1,1 6.2,6 11.4,1" fill="none" stroke="#00a1b2" stroke-width="2.2" /></svg>
<div class="r" style="left:631.30px;top:102.20px;width:21.70px;height:716.80px;background:linear-gradient(to right,#fcfcfc,#ececec 35%,#e4e4e4 85%,#d6d6d6)"></div>
<div class="r" style="left:637.00px;top:0.00px;width:16.00px;height:102.20px;background:linear-gradient(to right,#f4f4f4,#e6e6e6 85%,#d6d6d6)"></div>
<div class="r" style="left:638.80px;top:5.00px;width:12.20px;height:713.80px;background:linear-gradient(to right,#bcbcbc,#b4b4b4)"></div>
<div class="r" style="left:652.80px;top:0.00px;width:2.20px;height:819.00px;background:linear-gradient(to right,#8a8a8a,#5e5e5e 50%,#8a8a8a)"></div>
<div class="r" style="left:655.00px;top:0.00px;width:42.60px;height:819.00px;background:#e3e3ee"></div>
<div class="r" style="left:696.60px;top:0.00px;width:1.00px;height:819.00px;background:#dcdce8"></div>
<svg class="r" style="left:668.00px;top:1.50px;overflow:visible;" width="16" height="16" viewBox="0 0 16 16"><g fill="#2a2d55"><path d="M4,1.5 L12.5,1 L15,4 L14.2,12.5 L11.5,15 L3,15.5 L1,12.5 L1.5,4 Z"/></g><rect x="5" y="5" width="6.2" height="6.2" fill="#e4e4ee"/><path d="M1.5,13 L5,11 M11.2,5 L14.5,2.5" stroke="#e4e4ee" stroke-width="0.8"/></svg>
<svg class="r" style="left:669.00px;top:32.00px;overflow:visible;" width="14" height="14" viewBox="0 0 14 14"><circle cx="5.8" cy="5.8" r="4.4" fill="none" stroke="#2a2d55" stroke-width="1.5"/><line x1="9" y1="9" x2="13" y2="13" stroke="#2a2d55" stroke-width="1.8" stroke-linecap="round"/></svg>
<svg class="r" style="left:669.00px;top:62.60px;overflow:visible;" width="14" height="14" viewBox="0 0 14 14"><g fill="#2a2d55"><circle cx="2.00" cy="2.00" r="1.25"/><circle cx="6.90" cy="2.00" r="1.25"/><circle cx="11.80" cy="2.00" r="1.25"/><circle cx="2.00" cy="6.90" r="1.25"/><circle cx="6.90" cy="6.90" r="1.25"/><circle cx="11.80" cy="6.90" r="1.25"/><circle cx="2.00" cy="11.80" r="1.25"/><circle cx="6.90" cy="11.80" r="1.25"/><circle cx="11.80" cy="11.80" r="1.25"/></g></svg>
<div class="r" style="left:664.00px;top:99.00px;width:23.00px;height:1.00px;background:#cfd0de"></div>
<svg class="r" style="left:668.50px;top:120.50px;overflow:visible;" width="15" height="17" viewBox="0 0 15 17"><g fill="none" stroke-linecap="round"><polyline points="1,12.5 1,4 5.5,1" stroke="#6b5cf0" stroke-width="1.7"/><polyline points="4,14 4,5.5 8.5,2.5" stroke="#6455e6" stroke-width="1.7"/><polyline points="7,16 7,7.5 11.5,4.5 14,5.5" stroke="#6a5ae8" stroke-width="1.7"/><polyline points="14,5.5 14,13.5 7,16" stroke="#8f93ad" stroke-width="1.3"/><polygon points="7.8,8 13.2,6.2 13.2,13 7.8,14.8" fill="#e8e8f2" stroke="none"/></g></svg>
<svg class="r" style="left:667.50px;top:151.00px;overflow:visible;" width="17" height="15" viewBox="0 0 17 15"><rect x="0.5" y="2.5" width="13" height="10.5" rx="1" fill="#3aa896"/><path d="M6,0.5 H15 V7 Z" fill="#1f8a76"/><rect x="8" y="7" width="8.5" height="7.8" rx="1.2" fill="#17806c"/><circle cx="12.2" cy="10.8" r="1.6" fill="#7fd8c4"/><polyline points="1,9.5 5,5.5 8,8 14.5,1.5" fill="none" stroke="#e6fff8" stroke-width="1.1"/><rect x="3.5" y="8" width="1.5" height="4" fill="#8ee0cc"/></svg>
<svg class="r" style="left:668.80px;top:182.00px;overflow:visible;" width="13" height="13.5" viewBox="0 0 13 13.5"><rect x="0.3" y="0.3" width="12.4" height="12.8" rx="3" fill="#3566dc"/><path d="M2.6,2.6 L5.6,4.4 L2.6,6.2 Z" fill="#fff"/><rect x="2.6" y="3.6" width="5" height="1.6" fill="#fff"/><circle cx="9.4" cy="4.4" r="1.9" fill="#fff"/><path d="M6.8,7.2 L3.8,9 L6.8,10.8 Z" fill="#fff"/><rect x="5.6" y="8.2" width="3" height="1.6" fill="#fff"/><circle cx="3.4" cy="9" r="1.8" fill="#fff"/><circle cx="9.6" cy="9" r="1.9" fill="#fff"/><path d="M7.4,5 V8" stroke="#f0a050" stroke-width="0.9"/></svg>
<svg class="r" style="left:668.50px;top:211.00px;overflow:visible;" width="14" height="15.5" viewBox="0 0 14 15.5"><path d="M7.5,2.5 L13.5,5.8 V11 L8.5,13.5 Z" fill="#2d9a80"/><path d="M0.8,4.5 L6.8,1 Q8,0.6 8.5,1.8 L8.8,3.2 L2,7 Q0.8,7.2 0.8,6 Z" fill="#4a78e8"/><path d="M0.8,8.5 L7.5,13 Q8,14.8 6.5,14.8 L1.5,11.8 Q0.8,11 0.8,10 Z" fill="#3a3e66"/><circle cx="7.2" cy="8" r="1.7" fill="#eef6ff"/></svg>
<div class="r" style="left:665.00px;top:248.00px;width:21.00px;height:1.00px;background:#cfd0de"></div>
<svg class="r" style="left:667.50px;top:269.50px;overflow:visible;" width="18" height="18" viewBox="0 0 18 18"><rect x="0.5" y="0.5" width="13.5" height="14.5" rx="2.5" fill="#fff"/><path d="M7.2,1.8 L11.8,4 L12.9,9 L9.8,12.8 L4.6,12.8 L1.5,9 L2.6,4 Z" fill="#326ce5"/><circle cx="7.2" cy="7.6" r="2.3" fill="none" stroke="#cfe0ff" stroke-width="0.9"/><path d="M7.2,3.8 V11.4 M3.6,7.6 H10.8" stroke="#cfe0ff" stroke-width="0.6"/><rect x="7" y="11.4" width="10.2" height="5.6" rx="1" fill="#3f6ee6"/><text x="12.1" y="15.8" font-size="4" fill="#fff" text-anchor="middle" font-family="Liberation Sans" font-weight="700">NEW</text></svg>
<svg class="r" style="left:668.60px;top:301.00px;overflow:visible;" width="14" height="14" viewBox="0 0 14 14"><defs><radialGradient id="og" cx="50%" cy="50%" r="55%"><stop offset="0" stop-color="#b82848"/><stop offset="1" stop-color="#e0607e"/></radialGradient></defs><path d="M4.1,0.3 H9.9 L13.7,4.1 V9.9 L9.9,13.7 H4.1 L0.3,9.9 V4.1 Z" fill="url(#og)"/><path d="M5.9,2.8 H8.1 L7.6,8.6 H6.4 Z" fill="#fff"/><rect x="6.1" y="9.6" width="1.8" height="1.7" fill="#fff"/></svg>
<svg class="r" style="left:668.00px;top:329.30px;overflow:visible;" width="17" height="17" viewBox="0 0 17 17"><ellipse cx="8" cy="9.3" rx="7.6" ry="4.9" fill="#a5b1d6"/><ellipse cx="8" cy="9.8" rx="6.2" ry="3.9" fill="#8c9cc8"/><rect x="4" y="7" width="8" height="5" rx="2.2" fill="#33374d"/><rect x="5.6" y="8.3" width="1.3" height="2.4" fill="#e8e8f0"/><rect x="9.1" y="8.3" width="1.3" height="2.4" fill="#e8e8f0"/><line x1="8" y1="4.6" x2="10" y2="1.6" stroke="#4a5070" stroke-width="0.7"/><circle cx="10.2" cy="1.5" r="1.1" fill="#6a7aa8"/><rect x="6.2" y="11.2" width="10.4" height="5.8" rx="1" fill="#3f6ee6"/><text x="11.4" y="15.7" font-size="4" fill="#fff" text-anchor="middle" font-family="Liberation Sans" font-weight="700">NEW</text></svg>
<svg class="r" style="left:668.00px;top:357.90px;overflow:visible;" width="17" height="17" viewBox="0 0 17 17"><ellipse cx="8" cy="9.3" rx="7.6" ry="4.9" fill="#a5b1d6"/><ellipse cx="8" cy="9.8" rx="6.2" ry="3.9" fill="#8c9cc8"/><rect x="4" y="7" width="8" height="5" rx="2.2" fill="#33374d"/><rect x="5.6" y="8.3" width="1.3" height="2.4" fill="#e8e8f0"/><rect x="9.1" y="8.3" width="1.3" height="2.4" fill="#e8e8f0"/><line x1="8" y1="4.6" x2="10" y2="1.6" stroke="#4a5070" stroke-width="0.7"/><circle cx="10.2" cy="1.5" r="1.1" fill="#6a7aa8"/></svg>
<div class="r" style="left:655.00px;top:357.40px;width:2.60px;height:18.60px;background:#4b4fd8;border-radius:0 2px 2px 0"></div>
<svg class="r" style="left:668.70px;top:389.80px;overflow:visible;" width="14.2" height="14.2" viewBox="0 0 14.2 14.2"><rect x="0" y="0" width="6.4" height="6.4" rx="1.2" fill="#3566dc"/><rect x="7.6" y="0" width="6.4" height="6.4" rx="1.2" fill="#3566dc"/><rect x="0" y="7.6" width="6.4" height="6.4" rx="1.2" fill="#3566dc"/><circle cx="9.2" cy="9.2" r="1.4" fill="#e03a55"/><circle cx="12.6" cy="9.2" r="1.3" fill="#3566dc"/><circle cx="9.2" cy="12.6" r="1.3" fill="#3566dc"/><circle cx="12.6" cy="12.6" r="1.3" fill="#3566dc"/></svg>
<div class="r" style="left:655.00px;top:726.20px;width:42.00px;height:1.00px;background:#d2d3e0"></div>
<svg class="r" style="left:670.00px;top:735.50px;overflow:visible;" width="12" height="12" viewBox="0 0 12 12"><polyline points="2,1.5 6,6 2,10.5" fill="none" stroke="#2a2d55" stroke-width="1.3"/><polyline points="6,1.5 10,6 6,10.5" fill="none" stroke="#2a2d55" stroke-width="1.3"/></svg>
<svg class="r" style="left:669.00px;top:758.50px;overflow:visible;" width="14" height="14" viewBox="0 0 14 14"><circle cx="7" cy="7" r="5.8" fill="none" stroke="#2a2d55" stroke-width="1.3"/><circle cx="7" cy="7" r="2.6" fill="none" stroke="#2a2d55" stroke-width="1.3"/><path d="M2.9,2.9 L5.2,5.2 M11.1,2.9 L8.8,5.2 M2.9,11.1 L5.2,8.8 M11.1,11.1 L8.8,8.8" stroke="#2a2d55" stroke-width="1.2"/></svg>
<svg class="r" style="left:669.00px;top:782.00px;overflow:visible;" width="14" height="14" viewBox="0 0 14 14"><path d="M1.5,1 V12.5 H12.5" fill="none" stroke="#2a2d55" stroke-width="1.3"/><path d="M4,12 V6 M7,12 V7.5 M10,12 V6" stroke="#2a2d55" stroke-width="1.5"/><polyline points="1.5,3 5,5 8.5,3.5 12,1" fill="none" stroke="#2a2d55" stroke-width="1"/></svg>
<svg class="r" style="left:669.00px;top:808.00px;overflow:visible;" width="14" height="14" viewBox="0 0 14 14"><circle cx="7" cy="7" r="6.8" fill="#4b4e8c"/><path d="M7.8,3.5 V9 Q7.8,10.6 6.2,10.6 Q5.2,10.6 4.8,10" fill="none" stroke="#fff" stroke-width="1.4"/><path d="M9,4 V9.5" stroke="#f5a040" stroke-width="0.6"/></svg>
<div class="r" style="left:697.60px;top:0.00px;width:902.40px;height:21.00px;background:#1b1b1b"></div>
<svg class="r" style="left:1565.00px;top:0.00px;overflow:visible;" width="12.2" height="11" viewBox="0 0 12 11"><path d="M0.3,0 H11.7 V1.4 Q11.7,2.4 10.9,3.3 L7.2,6.9 V11 H4.8 V6.9 L1.1,3.3 Q0.3,2.4 0.3,1.4 Z" fill="#fff"/><ellipse cx="6" cy="2.4" rx="3.3" ry="0.65" fill="#1b1b1b"/></svg>
<div class="r" style="left:697.60px;top:21.00px;width:902.40px;height:24.50px;background:#008bd9"></div>
<svg class="r" style="left:697.60px;top:21.00px;overflow:visible;" width="162" height="24.5" viewBox="0 0 162 24.5"><path d="M0,0 H154.8 L160.5,12.25 L154.8,24.5 H0 Z" fill="#03489d"/><polyline points="154.8,-0.5 160.5,12.25 154.8,25" fill="none" stroke="#e8f3ff" stroke-width="1.1"/></svg>
<div class="t" style="left:705.60px;top:23.00px;font-size:10px;color:#fff;font-weight:400;letter-spacing:0.45px;-webkit-text-stroke:0.3px #fff;">Network availability monitors</div>
<div class="t" style="left:864.00px;top:23.00px;font-size:10px;color:#fff;font-weight:400;letter-spacing:0.17px;-webkit-text-stroke:0.3px #fff;">PM - DEMO - TCP hostGroup closed port 22</div>
<div class="r" style="left:697.00px;top:45.50px;width:903.00px;height:56.50px;background:#fff"></div>
<div class="r" style="left:697.00px;top:101.50px;width:903.00px;height:1.00px;background:#e3e3e3"></div>
<div class="r" style="left:703.20px;top:51.20px;width:41.80px;height:41.00px;background:#fff;border:1px solid #e4e4e4;border-radius:2px;box-sizing:border-box"></div>
<svg class="r" style="left:716.00px;top:63.00px;overflow:visible;" width="18" height="21" viewBox="0 0 18 21"><g fill="#454545"><rect x="1.9" y="0" width="14.2" height="11" rx="2.4"/><rect x="0" y="3.4" width="1.4" height="5.2" rx="0.7"/><rect x="16.6" y="3.4" width="1.4" height="5.2" rx="0.7"/><circle cx="5.9" cy="5.4" r="1.4" fill="#fff"/><circle cx="12" cy="5.4" r="1.4" fill="#fff"/><ellipse cx="8.95" cy="8.9" rx="2" ry="0.7" fill="#fff"/><path d="M4.1,13.1 H13.7 L12.9,18.9 Q12.6,20.6 10.9,20.6 H6.9 Q5.2,20.6 4.9,18.9 Z"/><path d="M2.6,13.8 Q0.3,17.2 0.5,18.8 Q0.8,20.2 2.1,20.2 Q3.4,20.2 3.4,18.8 Z"/><path d="M15.4,13.8 Q17.7,17.2 17.5,18.8 Q17.2,20.2 15.9,20.2 Q14.6,20.2 14.6,18.8 Z"/></g></svg>
<div class="t" style="left:754.40px;top:51.80px;font-size:14.5px;color:#393939;font-weight:400;letter-spacing:0.32px;-webkit-text-stroke:0.4px #393939;">PM - DEMO - TCP hostGroup closed port 22</div>
<div class="t" style="left:754.40px;top:72.80px;font-size:11px;color:#4b4b4b;font-weight:400;">Overview of the Network availability monitor</div>
<div class="r" style="left:697.00px;top:102.50px;width:903.00px;height:25.70px;background:#fff"></div>
<div class="r" style="left:697.00px;top:127.60px;width:903.00px;height:1.00px;background:#e6e6e6"></div>
<div class="t" style="left:712.60px;top:105.20px;font-size:10.45px;color:#4b4b4b;font-weight:400;">Properties and tags</div>
<div class="r" style="left:811.20px;top:108.00px;width:1.00px;height:15.00px;background:#e2e2e2"></div>
<div class="r" style="left:819.60px;top:106.20px;width:27.20px;height:17.40px;background:#dc172a;border-radius:2px"></div>
<svg class="r" style="left:825.20px;top:109.00px;overflow:visible;" width="12" height="12" viewBox="0 0 12 12"><circle cx="6" cy="6" r="5.6" fill="#fff"/><rect x="5" y="2.3" width="2" height="5" rx="0.6" fill="#dc172a"/><circle cx="6" cy="9.2" r="1.05" fill="#dc172a"/></svg>
<div class="t" style="left:838.20px;top:105.20px;font-size:10px;color:#fff;font-weight:700;">1</div>
<div class="t" style="left:850.30px;top:105.20px;font-size:10.2px;color:#4b4b4b;font-weight:400;">Problems</div>
<div class="r" style="left:900.60px;top:108.00px;width:1.00px;height:15.00px;background:#e2e2e2"></div>
<svg class="r" style="left:910.00px;top:110.20px;overflow:visible;" width="13" height="9.2" viewBox="0 0 14 11"><g fill="#222"><circle cx="3" cy="2.6" r="1.9"/><circle cx="11" cy="2.6" r="1.9"/><circle cx="7" cy="4" r="2.1"/><path d="M0,8.5 Q0,5.5 3,5.5 Q5,5.5 5.5,7 L4,10 H0 Z"/><path d="M14,8.5 Q14,5.5 11,5.5 Q9,5.5 8.5,7 L10,10 H14 Z"/><path d="M3.2,11 Q3.2,6.8 7,6.8 Q10.8,6.8 10.8,11 Z"/></g></svg>
<div class="t" style="left:927.30px;top:105.20px;font-size:10.3px;color:#4b4b4b;font-weight:400;">Owners</div>
<div class="r" style="left:710.30px;top:141.90px;width:867.40px;height:23.70px;background:#fff;border:1px solid #d2d2d2;border-top-color:#c8c8c8;border-radius:2px;box-sizing:border-box;box-shadow:inset 0 1px 1px rgba(0,0,0,0.06)"></div>
<svg class="r" style="left:717.50px;top:150.00px;overflow:visible;" width="9" height="8.2" viewBox="0 0 12 11"><path d="M0.3,0 H11.7 V1.4 Q11.7,2.4 10.9,3.3 L7.2,6.9 V11 H4.8 V6.9 L1.1,3.3 Q0.3,2.4 0.3,1.4 Z" fill="#7a7a7a"/><ellipse cx="6" cy="2.4" rx="3.3" ry="0.65" fill="#fff"/></svg>
<div class="t" style="left:734.70px;top:143.60px;font-size:10.5px;color:#8a8a8a;font-weight:400;">Filter by</div>
<div class="r" style="left:710.00px;top:178.00px;width:867.70px;height:232.00px;background:#fff;border-radius:2px"></div>
<div class="t" style="left:722.00px;top:190.80px;font-size:15px;color:#393939;font-weight:400;letter-spacing:0.45px;-webkit-text-stroke:0.4px #393939;">Metrics</div>
<svg class="r" style="left:1510.00px;top:190.20px;overflow:visible;" width="23.4" height="23.2" viewBox="0 0 23.4 23.2"><rect x="0.5" y="0.5" width="22.40" height="22.20" rx="2" fill="#fff" stroke="#26a8b9" stroke-width="1.2"/><circle cx="7.30" cy="12.00" r="1.4" fill="#00a1b2"/><circle cx="11.70" cy="12.00" r="1.4" fill="#00a1b2"/><circle cx="16.10" cy="12.00" r="1.4" fill="#00a1b2"/></svg>
<svg class="r" style="left:1548.60px;top:198.20px;overflow:visible;" width="11.5" height="6.1" viewBox="0 0 11.5 6.1"><polyline points="1,5.1 5.75,1 10.5,5.1" fill="none" stroke="#00a1b2" stroke-width="2.2" /></svg>
<div class="t" style="left:722.00px;top:223.80px;font-size:10.7px;color:#4b4b4b;font-weight:400;">Number of monitor executions</div>
<svg class="r" style="left:963.00px;top:223.00px;overflow:visible;" width="24.2" height="22.6" viewBox="0 0 24.2 22.6"><rect x="0.5" y="0.5" width="23.20" height="21.60" rx="2" fill="#fff" stroke="#26a8b9" stroke-width="1.2"/><circle cx="7.70" cy="11.70" r="1.4" fill="#00a1b2"/><circle cx="12.10" cy="11.70" r="1.4" fill="#00a1b2"/><circle cx="16.50" cy="11.70" r="1.4" fill="#00a1b2"/></svg>
<div class="r" style="left:746.00px;top:289.30px;width:239.60px;height:1.00px;background:#ececec"></div>
<div class="r" style="left:746.00px;top:321.50px;width:239.60px;height:1.00px;background:#ececec"></div>
<div class="r" style="left:746.00px;top:257.10px;width:239.60px;height:1.00px;background:#dadada"></div>
<div class="r" style="left:985.10px;top:257.60px;width:1.00px;height:96.60px;background:#dadada"></div>
<div class="r" style="left:745.50px;top:257.10px;width:1.00px;height:97.60px;background:#cfd5e6"></div>
<div class="r" style="left:746.00px;top:353.70px;width:239.60px;height:1.00px;background:#cfd5e6"></div>
<svg class="r" style="left:746.50px;top:274.80px;overflow:visible;" width="238.5" height="78.9" viewBox="0 0 238.5 78.9"><rect x="0" y="0" width="232.80" height="78.90" fill="#d7c3e5"/><rect x="235.70" y="0" width="2" height="78.90" fill="#d2bce2"/><rect x="0.00" y="0" width="1.1" height="78.90" fill="#b17fcf"/><rect x="4.00" y="0" width="1.1" height="78.90" fill="#b17fcf"/><rect x="8.50" y="0" width="1.1" height="78.90" fill="#b17fcf"/><rect x="12.50" y="0" width="1.1" height="78.90" fill="#b17fcf"/><rect x="16.50" y="0" width="1.1" height="78.90" fill="#b17fcf"/><rect x="21.00" y="0" width="1.1" height="78.90" fill="#b17fcf"/><rect x="25.50" y="0" width="1.1" height="78.90" fill="#b17fcf"/><rect x="28.50" y="0" width="1.1" height="78.90" fill="#b17fcf"/><rect x="31.50" y="0" width="1.1" height="78.90" fill="#b17fcf"/><rect x="36.00" y="0" width="1.1" height="78.90" fill="#b17fcf"/><rect x="40.00" y="0" width="1.1" height="78.90" fill="#b17fcf"/><rect x="44.50" y="0" width="1.1" height="78.90" fill="#b17fcf"/><rect x="47.50" y="0" width="1.1" height="78.90" fill="#b17fcf"/><rect x="50.00" y="0" width="1.1" height="78.90" fill="#b17fcf"/><rect x="54.00" y="0" width="1.1" height="78.90" fill="#b17fcf"/><rect x="57.50" y="0" width="1.1" height="78.90" fill="#b17fcf"/><rect x="60.50" y="0" width="1.1" height="78.90" fill="#b17fcf"/><rect x="63.00" y="0" width="1.1" height="78.90" fill="#b17fcf"/><rect x="67.50" y="0" width="1.1" height="78.90" fill="#b17fcf"/><rect x="70.00" y="0" width="1.1" height="78.90" fill="#b17fcf"/><rect x="74.50" y="0" width="1.1" height="78.90" fill="#b17fcf"/><rect x="78.50" y="0" width="1.1" height="78.90" fill="#b17fcf"/><rect x="82.50" y="0" width="1.1" height="78.90" fill="#b17fcf"/><rect x="87.00" y="0" width="1.1" height="78.90" fill="#b17fcf"/><rect x="90.00" y="0" width="1.1" height="78.90" fill="#b17fcf"/><rect x="94.50" y="0" width="1.1" height="78.90" fill="#b17fcf"/><rect x="97.00" y="0" width="1.1" height="78.90" fill="#b17fcf"/><rect x="101.50" y="0" width="1.1" height="78.90" fill="#b17fcf"/><rect x="104.00" y="0" width="1.1" height="78.90" fill="#b17fcf"/><rect x="106.50" y="0" width="1.1" height="78.90" fill="#b17fcf"/><rect x="109.00" y="0" width="1.1" height="78.90" fill="#b17fcf"/><rect x="112.00" y="0" width="1.1" height="78.90" fill="#b17fcf"/><rect x="115.00" y="0" width="1.1" height="78.90" fill="#b17fcf"/><rect x="119.50" y="0" width="1.1" height="78.90" fill="#b17fcf"/><rect x="122.00" y="0" width="1.1" height="78.90" fill="#b17fcf"/><rect x="126.00" y="0" width="1.1" height="78.90" fill="#b17fcf"/><rect x="129.50" y="0" width="1.1" height="78.90" fill="#b17fcf"/><rect x="133.50" y="0" width="1.1" height="78.90" fill="#b17fcf"/><rect x="138.00" y="0" width="1.1" height="78.90" fill="#b17fcf"/><rect x="141.00" y="0" width="1.1" height="78.90" fill="#b17fcf"/><rect x="145.50" y="0" width="1.1" height="78.90" fill="#b17fcf"/><rect x="148.50" y="0" width="1.1" height="78.90" fill="#b17fcf"/><rect x="152.00" y="0" width="1.1" height="78.90" fill="#b17fcf"/><rect x="156.00" y="0" width="1.1" height="78.90" fill="#b17fcf"/><rect x="158.50" y="0" width="1.1" height="78.90" fill="#b17fcf"/><rect x="161.00" y="0" width="1.1" height="78.90" fill="#b17fcf"/><rect x="165.00" y="0" width="1.1" height="78.90" fill="#b17fcf"/><rect x="168.50" y="0" width="1.1" height="78.90" fill="#b17fcf"/><rect x="172.50" y="0" width="1.1" height="78.90" fill="#b17fcf"/><rect x="177.00" y="0" width="1.1" height="78.90" fill="#b17fcf"/><rect x="179.50" y="0" width="1.1" height="78.90" fill="#b17fcf"/><rect x="183.00" y="0" width="1.1" height="78.90" fill="#b17fcf"/><rect x="186.50" y="0" width="1.1" height="78.90" fill="#b17fcf"/><rect x="189.50" y="0" width="1.1" height="78.90" fill="#b17fcf"/><rect x="194.00" y="0" width="1.1" height="78.90" fill="#b17fcf"/><rect x="197.50" y="0" width="1.1" height="78.90" fill="#b17fcf"/><rect x="200.00" y="0" width="1.1" height="78.90" fill="#b17fcf"/><rect x="202.50" y="0" width="1.1" height="78.90" fill="#b17fcf"/><rect x="207.00" y="0" width="1.1" height="78.90" fill="#b17fcf"/><rect x="209.50" y="0" width="1.1" height="78.90" fill="#b17fcf"/><rect x="213.50" y="0" width="1.1" height="78.90" fill="#b17fcf"/><rect x="216.00" y="0" width="1.1" height="78.90" fill="#b17fcf"/><rect x="219.50" y="0" width="1.1" height="78.90" fill="#b17fcf"/><rect x="223.50" y="0" width="1.1" height="78.90" fill="#b17fcf"/><rect x="226.00" y="0" width="1.1" height="78.90" fill="#b17fcf"/><rect x="228.50" y="0" width="1.1" height="78.90" fill="#b17fcf"/><rect x="231.00" y="0" width="1.1" height="78.90" fill="#b17fcf"/><rect x="2.84" y="0" width="0.9" height="78.90" fill="#fff"/><rect x="12.84" y="0" width="0.9" height="78.90" fill="#fff"/><rect x="25.84" y="0" width="0.9" height="78.90" fill="#fff"/><rect x="38.84" y="0" width="0.9" height="78.90" fill="#fff"/><rect x="51.84" y="0" width="0.9" height="78.90" fill="#fff"/><rect x="64.84" y="0" width="0.9" height="78.90" fill="#fff"/><rect x="74.84" y="0" width="0.9" height="78.90" fill="#fff"/><rect x="88.84" y="0" width="0.9" height="78.90" fill="#fff"/><rect x="100.84" y="0" width="0.9" height="78.90" fill="#fff"/><rect x="112.84" y="0" width="0.9" height="78.90" fill="#fff"/><rect x="124.84" y="0" width="0.9" height="78.90" fill="#fff"/><rect x="134.84" y="0" width="0.9" height="78.90" fill="#fff"/><rect x="146.84" y="0" width="0.9" height="78.90" fill="#fff"/><rect x="158.84" y="0" width="0.9" height="78.90" fill="#fff"/><rect x="168.84" y="0" width="0.9" height="78.90" fill="#fff"/><rect x="181.84" y="0" width="0.9" height="78.90" fill="#fff"/><rect x="191.84" y="0" width="0.9" height="78.90" fill="#fff"/><rect x="203.84" y="0" width="0.9" height="78.90" fill="#fff"/><rect x="215.84" y="0" width="0.9" height="78.90" fill="#fff"/><rect x="225.84" y="0" width="0.9" height="78.90" fill="#fff"/></svg>
<div class="r" style="left:746.50px;top:289.30px;width:238.50px;height:1.00px;background:rgba(90,60,110,0.10)"></div>
<div class="r" style="left:746.50px;top:321.50px;width:238.50px;height:1.00px;background:rgba(90,60,110,0.10)"></div>
<div class="r" style="left:961.10px;top:257.60px;width:1.80px;height:96.60px;background:#2aadc0"></div>
<div class="t" style="right:864.00px;text-align:right;top:248.20px;font-size:8.6px;color:#4b4b4b;font-weight:400;">1.2</div>
<div class="r" style="left:739.50px;top:257.70px;width:6.50px;height:1.00px;background:#cfd5e6"></div>
<div class="t" style="right:864.00px;text-align:right;top:280.00px;font-size:8.6px;color:#4b4b4b;font-weight:400;">0.8</div>
<div class="r" style="left:739.50px;top:289.50px;width:6.50px;height:1.00px;background:#cfd5e6"></div>
<div class="t" style="right:864.00px;text-align:right;top:312.10px;font-size:8.6px;color:#4b4b4b;font-weight:400;">0.4</div>
<div class="r" style="left:739.50px;top:321.60px;width:6.50px;height:1.00px;background:#cfd5e6"></div>
<div class="t" style="right:864.00px;text-align:right;top:344.20px;font-size:8.6px;color:#4b4b4b;font-weight:400;">0</div>
<div class="r" style="left:739.50px;top:353.70px;width:6.50px;height:1.00px;background:#cfd5e6"></div>
<div class="r" style="left:769.70px;top:354.20px;width:1.00px;height:5.50px;background:#cfd5e6"></div>
<div class="t" style="left:570.20px;width:400px;text-align:center;top:356.40px;font-size:8.4px;color:#4b4b4b;font-weight:400;">14:00</div>
<div class="r" style="left:829.70px;top:354.20px;width:1.00px;height:5.50px;background:#cfd5e6"></div>
<div class="t" style="left:630.20px;width:400px;text-align:center;top:356.40px;font-size:8.4px;color:#4b4b4b;font-weight:400;">14:30</div>
<div class="r" style="left:889.50px;top:354.20px;width:1.00px;height:5.50px;background:#cfd5e6"></div>
<div class="t" style="left:690.00px;width:400px;text-align:center;top:356.40px;font-size:8.4px;color:#4b4b4b;font-weight:400;">15:00</div>
<div class="r" style="left:949.50px;top:354.20px;width:1.00px;height:5.50px;background:#cfd5e6"></div>
<div class="t" style="left:750.00px;width:400px;text-align:center;top:356.40px;font-size:8.4px;color:#4b4b4b;font-weight:400;">15:30</div>
<svg class="r" style="left:731.00px;top:385.00px;overflow:visible;" width="10" height="9" viewBox="0 0 10 9"><g fill="#7b3ea6"><rect x="0.5" y="3.5" width="2" height="5"/><rect x="3.8" y="0.5" width="2" height="8"/><rect x="7.1" y="2.2" width="2" height="6.3"/></g></svg>
<div class="t" style="left:746.20px;top:380.00px;font-size:8.85px;color:#4b4b4b;font-weight:400;">MultiProtocol demo location1 [Ubuntu 22 S] | CONSTRAI...</div>
<div class="t" style="left:1010.80px;top:223.80px;font-size:10.7px;color:#4b4b4b;font-weight:400;">Average monitor execution time</div>
<svg class="r" style="left:1253.00px;top:223.00px;overflow:visible;" width="24.2" height="22.6" viewBox="0 0 24.2 22.6"><rect x="0.5" y="0.5" width="23.20" height="21.60" rx="2" fill="#fff" stroke="#26a8b9" stroke-width="1.2"/><circle cx="7.70" cy="11.70" r="1.4" fill="#00a1b2"/><circle cx="12.10" cy="11.70" r="1.4" fill="#00a1b2"/><circle cx="16.50" cy="11.70" r="1.4" fill="#00a1b2"/></svg>
<div class="r" style="left:1053.50px;top:289.30px;width:222.20px;height:1.00px;background:#ececec"></div>
<div class="r" style="left:1053.50px;top:321.50px;width:222.20px;height:1.00px;background:#ececec"></div>
<div class="r" style="left:1053.50px;top:257.00px;width:222.20px;height:1.00px;background:#dadada"></div>
<div class="r" style="left:1275.20px;top:257.50px;width:1.00px;height:96.70px;background:#dadada"></div>
<div class="r" style="left:1053.00px;top:257.00px;width:1.00px;height:97.70px;background:#cfd5e6"></div>
<div class="r" style="left:1053.50px;top:353.70px;width:222.20px;height:1.00px;background:#cfd5e6"></div>
<svg class="r" style="left:1053.50px;top:257.50px;overflow:visible;" width="226.2" height="30" viewBox="0 0 226.2 30"><line x1="0" y1="16.2" x2="218.50" y2="16.2" stroke="#7b3ea6" stroke-width="2"/><circle cx="218.70" cy="16.2" r="3.3" fill="#7b3ea6"/></svg>
<div class="r" style="left:1252.60px;top:257.50px;width:1.80px;height:96.70px;background:#2aadc0"></div>
<div class="t" style="right:557.40px;text-align:right;top:247.60px;font-size:8.6px;color:#4b4b4b;font-weight:400;">1.2 s</div>
<div class="r" style="left:1046.10px;top:257.10px;width:7.40px;height:1.00px;background:#cfd5e6"></div>
<div class="t" style="right:557.40px;text-align:right;top:279.80px;font-size:8.6px;color:#4b4b4b;font-weight:400;">800 ms</div>
<div class="r" style="left:1046.10px;top:289.30px;width:7.40px;height:1.00px;background:#cfd5e6"></div>
<div class="t" style="right:557.40px;text-align:right;top:312.00px;font-size:8.6px;color:#4b4b4b;font-weight:400;">400 ms</div>
<div class="r" style="left:1046.10px;top:321.50px;width:7.40px;height:1.00px;background:#cfd5e6"></div>
<div class="t" style="right:557.40px;text-align:right;top:344.20px;font-size:8.6px;color:#4b4b4b;font-weight:400;">0 ms</div>
<div class="r" style="left:1046.10px;top:353.70px;width:7.40px;height:1.00px;background:#cfd5e6"></div>
<div class="r" style="left:1075.70px;top:354.20px;width:1.00px;height:5.50px;background:#cfd5e6"></div>
<div class="t" style="left:876.20px;width:400px;text-align:center;top:356.40px;font-size:8.4px;color:#4b4b4b;font-weight:400;">14:00</div>
<div class="r" style="left:1131.10px;top:354.20px;width:1.00px;height:5.50px;background:#cfd5e6"></div>
<div class="t" style="left:931.60px;width:400px;text-align:center;top:356.40px;font-size:8.4px;color:#4b4b4b;font-weight:400;">14:30</div>
<div class="r" style="left:1186.70px;top:354.20px;width:1.00px;height:5.50px;background:#cfd5e6"></div>
<div class="t" style="left:987.20px;width:400px;text-align:center;top:356.40px;font-size:8.4px;color:#4b4b4b;font-weight:400;">15:00</div>
<div class="r" style="left:1242.10px;top:354.20px;width:1.00px;height:5.50px;background:#cfd5e6"></div>
<div class="t" style="left:1042.60px;width:400px;text-align:center;top:356.40px;font-size:8.4px;color:#4b4b4b;font-weight:400;">15:30</div>
<svg class="r" style="left:1049.50px;top:385.00px;overflow:visible;" width="10" height="9" viewBox="0 0 10 9"><polyline points="0.8,8 3.5,4.5 5.5,6 9.2,1.5" fill="none" stroke="#7b3ea6" stroke-width="1.5"/></svg>
<div class="t" style="left:1064.20px;top:380.00px;font-size:8.85px;color:#4b4b4b;font-weight:400;">MultiProtocol demo location1 [Ubuntu 22 S]</div>
<div class="t" style="left:1300.80px;top:223.80px;font-size:10.7px;color:#4b4b4b;font-weight:400;">Average monitor availability</div>
<svg class="r" style="left:1542.50px;top:223.00px;overflow:visible;" width="23.3" height="22.6" viewBox="0 0 23.3 22.6"><rect x="0.5" y="0.5" width="22.30" height="21.60" rx="2" fill="#fff" stroke="#26a8b9" stroke-width="1.2"/><circle cx="7.25" cy="11.70" r="1.4" fill="#00a1b2"/><circle cx="11.65" cy="11.70" r="1.4" fill="#00a1b2"/><circle cx="16.05" cy="11.70" r="1.4" fill="#00a1b2"/></svg>
<div class="r" style="left:1319.20px;top:289.30px;width:245.80px;height:1.00px;background:#ececec"></div>
<div class="r" style="left:1319.20px;top:321.50px;width:245.80px;height:1.00px;background:#ececec"></div>
<div class="r" style="left:1319.20px;top:257.00px;width:245.80px;height:1.00px;background:#dadada"></div>
<div class="r" style="left:1564.50px;top:257.50px;width:1.00px;height:96.70px;background:#dadada"></div>
<div class="r" style="left:1318.70px;top:257.00px;width:1.00px;height:97.70px;background:#cfd5e6"></div>
<div class="r" style="left:1319.20px;top:353.70px;width:245.80px;height:1.00px;background:#cfd5e6"></div>
<svg class="r" style="left:1319.20px;top:349.20px;overflow:visible;" width="247.8" height="10" viewBox="0 0 247.8 10"><line x1="0" y1="5" x2="241.80" y2="5" stroke="#7b3ea6" stroke-width="1.5"/><circle cx="242.20" cy="5" r="3.1" fill="#7b3ea6"/></svg>
<div class="r" style="left:1540.10px;top:257.50px;width:1.80px;height:96.70px;background:#2aadc0"></div>
<div class="t" style="right:290.50px;text-align:right;top:247.60px;font-size:8.6px;color:#4b4b4b;font-weight:400;">3</div>
<div class="r" style="left:1313.00px;top:257.10px;width:6.20px;height:1.00px;background:#cfd5e6"></div>
<div class="t" style="right:290.50px;text-align:right;top:279.80px;font-size:8.6px;color:#4b4b4b;font-weight:400;">2</div>
<div class="r" style="left:1313.00px;top:289.30px;width:6.20px;height:1.00px;background:#cfd5e6"></div>
<div class="t" style="right:290.50px;text-align:right;top:312.00px;font-size:8.6px;color:#4b4b4b;font-weight:400;">1</div>
<div class="r" style="left:1313.00px;top:321.50px;width:6.20px;height:1.00px;background:#cfd5e6"></div>
<div class="t" style="right:290.50px;text-align:right;top:344.20px;font-size:8.6px;color:#4b4b4b;font-weight:400;">0</div>
<div class="r" style="left:1313.00px;top:353.70px;width:6.20px;height:1.00px;background:#cfd5e6"></div>
<div class="r" style="left:1343.10px;top:354.20px;width:1.00px;height:5.50px;background:#cfd5e6"></div>
<div class="t" style="left:1143.60px;width:400px;text-align:center;top:356.40px;font-size:8.4px;color:#4b4b4b;font-weight:400;">14:00</div>
<div class="r" style="left:1404.70px;top:354.20px;width:1.00px;height:5.50px;background:#cfd5e6"></div>
<div class="t" style="left:1205.20px;width:400px;text-align:center;top:356.40px;font-size:8.4px;color:#4b4b4b;font-weight:400;">14:30</div>
<div class="r" style="left:1466.50px;top:354.20px;width:1.00px;height:5.50px;background:#cfd5e6"></div>
<div class="t" style="left:1267.00px;width:400px;text-align:center;top:356.40px;font-size:8.4px;color:#4b4b4b;font-weight:400;">15:00</div>
<div class="r" style="left:1528.10px;top:354.20px;width:1.00px;height:5.50px;background:#cfd5e6"></div>
<div class="t" style="left:1328.60px;width:400px;text-align:center;top:356.40px;font-size:8.4px;color:#4b4b4b;font-weight:400;">15:30</div>
<svg class="r" style="left:1339.50px;top:385.00px;overflow:visible;" width="10" height="9" viewBox="0 0 10 9"><polyline points="0.8,8 3.5,4.5 5.5,6 9.2,1.5" fill="none" stroke="#7b3ea6" stroke-width="1.5"/></svg>
<div class="t" style="left:1354.20px;top:380.00px;font-size:8.85px;color:#4b4b4b;font-weight:400;">MultiProtocol demo location1 [Ubuntu 22 S]</div>
<div class="r" style="left:710.00px;top:422.00px;width:867.70px;height:253.60px;background:#fff;border-radius:2px"></div>
<div class="t" style="left:722.00px;top:435.00px;font-size:15px;color:#393939;font-weight:400;letter-spacing:0.2px;-webkit-text-stroke:0.4px #393939;">Request metrics</div>
<svg class="r" style="left:1509.80px;top:434.20px;overflow:visible;" width="23.4" height="23.8" viewBox="0 0 23.4 23.8"><rect x="0.5" y="0.5" width="22.40" height="22.80" rx="2" fill="#fff" stroke="#26a8b9" stroke-width="1.2"/><circle cx="7.30" cy="12.30" r="1.4" fill="#00a1b2"/><circle cx="11.70" cy="12.30" r="1.4" fill="#00a1b2"/><circle cx="16.10" cy="12.30" r="1.4" fill="#00a1b2"/></svg>
<svg class="r" style="left:1548.60px;top:442.80px;overflow:visible;" width="11.5" height="6.1" viewBox="0 0 11.5 6.1"><polyline points="1,5.1 5.75,1 10.5,5.1" fill="none" stroke="#00a1b2" stroke-width="2.2" /></svg>
<div class="t" style="left:722.00px;top:468.00px;font-size:10.7px;color:#4b4b4b;font-weight:400;">Average number of requests executions</div>
<svg class="r" style="left:1108.00px;top:467.00px;overflow:visible;" width="23.6" height="23.6" viewBox="0 0 23.6 23.6"><rect x="0.5" y="0.5" width="22.60" height="22.60" rx="2" fill="#fff" stroke="#26a8b9" stroke-width="1.2"/><circle cx="7.40" cy="12.20" r="1.4" fill="#00a1b2"/><circle cx="11.80" cy="12.20" r="1.4" fill="#00a1b2"/><circle cx="16.20" cy="12.20" r="1.4" fill="#00a1b2"/></svg>
<div class="r" style="left:746.00px;top:534.30px;width:384.00px;height:1.00px;background:#ececec"></div>
<div class="r" style="left:746.00px;top:566.50px;width:384.00px;height:1.00px;background:#ececec"></div>
<div class="r" style="left:746.00px;top:502.10px;width:384.00px;height:1.00px;background:#dadada"></div>
<div class="r" style="left:1129.50px;top:502.60px;width:1.00px;height:96.60px;background:#dadada"></div>
<div class="r" style="left:745.50px;top:502.10px;width:1.00px;height:97.60px;background:#cfd5e6"></div>
<div class="r" style="left:746.00px;top:598.70px;width:384.00px;height:1.00px;background:#cfd5e6"></div>
<svg class="r" style="left:746.50px;top:519.80px;overflow:visible;" width="382.9" height="78.9" viewBox="0 0 382.9 78.9"><rect x="0" y="0" width="374.50" height="78.90" fill="#fbf1f5"/><rect x="0.30" y="0" width="1.5" height="78.90" fill="#cfa2d2"/><rect x="3.60" y="0" width="1.5" height="78.90" fill="#d2a0cf"/><rect x="7.20" y="0" width="1.5" height="78.90" fill="#d7a4c8"/><rect x="10.60" y="0" width="1.5" height="78.90" fill="#dcaacb"/><rect x="13.60" y="0" width="1.5" height="78.90" fill="#dcaacb"/><rect x="16.60" y="0" width="1.5" height="78.90" fill="#d2a0cf"/><rect x="20.00" y="0" width="1.5" height="78.90" fill="#dcaacb"/><rect x="23.40" y="0" width="1.5" height="78.90" fill="#cfa2d2"/><rect x="26.40" y="0" width="1.5" height="78.90" fill="#cfa2d2"/><rect x="29.60" y="0" width="1.5" height="78.90" fill="#d7a4c8"/><rect x="32.80" y="0" width="1.5" height="78.90" fill="#e0b0c0"/><rect x="36.10" y="0" width="1.5" height="78.90" fill="#dcaacb"/><rect x="39.50" y="0" width="1.5" height="78.90" fill="#dcaacb"/><rect x="42.50" y="0" width="1.5" height="78.90" fill="#dcaacb"/><rect x="46.10" y="0" width="1.5" height="78.90" fill="#cfa2d2"/><rect x="49.50" y="0" width="1.5" height="78.90" fill="#dcaacb"/><rect x="52.70" y="0" width="1.5" height="78.90" fill="#d7a4c8"/><rect x="55.70" y="0" width="1.5" height="78.90" fill="#dcaacb"/><rect x="58.90" y="0" width="1.5" height="78.90" fill="#dcaacb"/><rect x="62.10" y="0" width="1.5" height="78.90" fill="#d2a0cf"/><rect x="65.40" y="0" width="1.5" height="78.90" fill="#dcaacb"/><rect x="69.00" y="0" width="1.5" height="78.90" fill="#dcaacb"/><rect x="72.20" y="0" width="1.5" height="78.90" fill="#dcaacb"/><rect x="75.60" y="0" width="1.5" height="78.90" fill="#d2a0cf"/><rect x="78.60" y="0" width="1.5" height="78.90" fill="#d2a0cf"/><rect x="82.00" y="0" width="1.5" height="78.90" fill="#dcaacb"/><rect x="85.20" y="0" width="1.5" height="78.90" fill="#d2a0cf"/><rect x="88.20" y="0" width="1.5" height="78.90" fill="#d2a0cf"/><rect x="91.50" y="0" width="1.5" height="78.90" fill="#cfa2d2"/><rect x="95.10" y="0" width="1.5" height="78.90" fill="#d7a4c8"/><rect x="98.70" y="0" width="1.5" height="78.90" fill="#d2a0cf"/><rect x="101.70" y="0" width="1.5" height="78.90" fill="#d2a0cf"/><rect x="105.00" y="0" width="1.5" height="78.90" fill="#d2a0cf"/><rect x="108.40" y="0" width="1.5" height="78.90" fill="#d2a0cf"/><rect x="111.60" y="0" width="1.5" height="78.90" fill="#e0b0c0"/><rect x="115.00" y="0" width="1.5" height="78.90" fill="#dcaacb"/><rect x="118.00" y="0" width="1.5" height="78.90" fill="#d2a0cf"/><rect x="121.00" y="0" width="1.5" height="78.90" fill="#d2a0cf"/><rect x="124.40" y="0" width="1.5" height="78.90" fill="#d7a4c8"/><rect x="128.00" y="0" width="1.5" height="78.90" fill="#e0b0c0"/><rect x="131.30" y="0" width="1.5" height="78.90" fill="#e0b0c0"/><rect x="134.90" y="0" width="1.5" height="78.90" fill="#d7a4c8"/><rect x="138.30" y="0" width="1.5" height="78.90" fill="#d7a4c8"/><rect x="141.50" y="0" width="1.5" height="78.90" fill="#cfa2d2"/><rect x="144.70" y="0" width="1.5" height="78.90" fill="#d7a4c8"/><rect x="147.90" y="0" width="1.5" height="78.90" fill="#e0b0c0"/><rect x="151.20" y="0" width="1.5" height="78.90" fill="#cfa2d2"/><rect x="154.50" y="0" width="1.5" height="78.90" fill="#cfa2d2"/><rect x="157.80" y="0" width="1.5" height="78.90" fill="#e0b0c0"/><rect x="160.80" y="0" width="1.5" height="78.90" fill="#cfa2d2"/><rect x="164.10" y="0" width="1.5" height="78.90" fill="#d2a0cf"/><rect x="167.10" y="0" width="1.5" height="78.90" fill="#e0b0c0"/><rect x="170.10" y="0" width="1.5" height="78.90" fill="#dcaacb"/><rect x="173.40" y="0" width="1.5" height="78.90" fill="#cfa2d2"/><rect x="177.00" y="0" width="1.5" height="78.90" fill="#d2a0cf"/><rect x="180.20" y="0" width="1.5" height="78.90" fill="#d2a0cf"/><rect x="183.50" y="0" width="1.5" height="78.90" fill="#cfa2d2"/><rect x="186.50" y="0" width="1.5" height="78.90" fill="#d2a0cf"/><rect x="189.80" y="0" width="1.5" height="78.90" fill="#d2a0cf"/><rect x="193.00" y="0" width="1.5" height="78.90" fill="#d7a4c8"/><rect x="196.20" y="0" width="1.5" height="78.90" fill="#d2a0cf"/><rect x="199.60" y="0" width="1.5" height="78.90" fill="#dcaacb"/><rect x="202.60" y="0" width="1.5" height="78.90" fill="#d7a4c8"/><rect x="206.20" y="0" width="1.5" height="78.90" fill="#cfa2d2"/><rect x="209.60" y="0" width="1.5" height="78.90" fill="#d7a4c8"/><rect x="212.80" y="0" width="1.5" height="78.90" fill="#cfa2d2"/><rect x="216.10" y="0" width="1.5" height="78.90" fill="#d2a0cf"/><rect x="219.50" y="0" width="1.5" height="78.90" fill="#e0b0c0"/><rect x="222.70" y="0" width="1.5" height="78.90" fill="#d7a4c8"/><rect x="225.70" y="0" width="1.5" height="78.90" fill="#e0b0c0"/><rect x="229.00" y="0" width="1.5" height="78.90" fill="#dcaacb"/><rect x="232.20" y="0" width="1.5" height="78.90" fill="#cfa2d2"/><rect x="235.40" y="0" width="1.5" height="78.90" fill="#e0b0c0"/><rect x="238.40" y="0" width="1.5" height="78.90" fill="#dcaacb"/><rect x="241.80" y="0" width="1.5" height="78.90" fill="#d2a0cf"/><rect x="245.00" y="0" width="1.5" height="78.90" fill="#d7a4c8"/><rect x="248.40" y="0" width="1.5" height="78.90" fill="#d2a0cf"/><rect x="251.60" y="0" width="1.5" height="78.90" fill="#e0b0c0"/><rect x="255.20" y="0" width="1.5" height="78.90" fill="#dcaacb"/><rect x="258.80" y="0" width="1.5" height="78.90" fill="#e0b0c0"/><rect x="262.20" y="0" width="1.5" height="78.90" fill="#d2a0cf"/><rect x="265.60" y="0" width="1.5" height="78.90" fill="#d2a0cf"/><rect x="268.90" y="0" width="1.5" height="78.90" fill="#e0b0c0"/><rect x="272.30" y="0" width="1.5" height="78.90" fill="#dcaacb"/><rect x="275.30" y="0" width="1.5" height="78.90" fill="#e0b0c0"/><rect x="278.90" y="0" width="1.5" height="78.90" fill="#dcaacb"/><rect x="282.30" y="0" width="1.5" height="78.90" fill="#d2a0cf"/><rect x="285.50" y="0" width="1.5" height="78.90" fill="#d7a4c8"/><rect x="288.90" y="0" width="1.5" height="78.90" fill="#d2a0cf"/><rect x="292.50" y="0" width="1.5" height="78.90" fill="#cfa2d2"/><rect x="296.10" y="0" width="1.5" height="78.90" fill="#d2a0cf"/><rect x="299.10" y="0" width="1.5" height="78.90" fill="#d2a0cf"/><rect x="302.70" y="0" width="1.5" height="78.90" fill="#d7a4c8"/><rect x="306.00" y="0" width="1.5" height="78.90" fill="#d2a0cf"/><rect x="309.60" y="0" width="1.5" height="78.90" fill="#d2a0cf"/><rect x="313.00" y="0" width="1.5" height="78.90" fill="#d2a0cf"/><rect x="316.30" y="0" width="1.5" height="78.90" fill="#d2a0cf"/><rect x="319.50" y="0" width="1.5" height="78.90" fill="#cfa2d2"/><rect x="322.50" y="0" width="1.5" height="78.90" fill="#e0b0c0"/><rect x="326.10" y="0" width="1.5" height="78.90" fill="#d2a0cf"/><rect x="329.40" y="0" width="1.5" height="78.90" fill="#d2a0cf"/><rect x="332.80" y="0" width="1.5" height="78.90" fill="#d2a0cf"/><rect x="336.40" y="0" width="1.5" height="78.90" fill="#d2a0cf"/><rect x="339.70" y="0" width="1.5" height="78.90" fill="#d2a0cf"/><rect x="343.00" y="0" width="1.5" height="78.90" fill="#e0b0c0"/><rect x="346.30" y="0" width="1.5" height="78.90" fill="#dcaacb"/><rect x="349.70" y="0" width="1.5" height="78.90" fill="#d2a0cf"/><rect x="353.00" y="0" width="1.5" height="78.90" fill="#cfa2d2"/><rect x="356.20" y="0" width="1.5" height="78.90" fill="#cfa2d2"/><rect x="359.40" y="0" width="1.5" height="78.90" fill="#dcaacb"/><rect x="362.70" y="0" width="1.5" height="78.90" fill="#e0b0c0"/><rect x="366.00" y="0" width="1.5" height="78.90" fill="#d7a4c8"/><rect x="369.40" y="0" width="1.5" height="78.90" fill="#dcaacb"/><rect x="373.00" y="0" width="1.5" height="78.90" fill="#cfa2d2"/><rect x="5.99" y="0" width="1.2" height="78.90" fill="#fff"/><rect x="17.99" y="0" width="1.2" height="78.90" fill="#fff"/><rect x="28.99" y="0" width="1.2" height="78.90" fill="#fff"/><rect x="39.99" y="0" width="1.2" height="78.90" fill="#fff"/><rect x="48.99" y="0" width="1.2" height="78.90" fill="#fff"/><rect x="58.99" y="0" width="1.2" height="78.90" fill="#fff"/><rect x="68.99" y="0" width="1.2" height="78.90" fill="#fff"/><rect x="80.99" y="0" width="1.2" height="78.90" fill="#fff"/><rect x="90.99" y="0" width="1.2" height="78.90" fill="#fff"/><rect x="100.99" y="0" width="1.2" height="78.90" fill="#fff"/><rect x="110.99" y="0" width="1.2" height="78.90" fill="#fff"/><rect x="119.99" y="0" width="1.2" height="78.90" fill="#fff"/><rect x="131.99" y="0" width="1.2" height="78.90" fill="#fff"/><rect x="141.99" y="0" width="1.2" height="78.90" fill="#fff"/><rect x="151.99" y="0" width="1.2" height="78.90" fill="#fff"/><rect x="160.99" y="0" width="1.2" height="78.90" fill="#fff"/><rect x="170.99" y="0" width="1.2" height="78.90" fill="#fff"/><rect x="179.99" y="0" width="1.2" height="78.90" fill="#fff"/><rect x="190.99" y="0" width="1.2" height="78.90" fill="#fff"/><rect x="200.99" y="0" width="1.2" height="78.90" fill="#fff"/><rect x="212.99" y="0" width="1.2" height="78.90" fill="#fff"/><rect x="222.99" y="0" width="1.2" height="78.90" fill="#fff"/><rect x="231.99" y="0" width="1.2" height="78.90" fill="#fff"/><rect x="243.99" y="0" width="1.2" height="78.90" fill="#fff"/><rect x="255.99" y="0" width="1.2" height="78.90" fill="#fff"/><rect x="266.99" y="0" width="1.2" height="78.90" fill="#fff"/><rect x="278.99" y="0" width="1.2" height="78.90" fill="#fff"/><rect x="287.99" y="0" width="1.2" height="78.90" fill="#fff"/><rect x="297.99" y="0" width="1.2" height="78.90" fill="#fff"/><rect x="307.99" y="0" width="1.2" height="78.90" fill="#fff"/><rect x="318.99" y="0" width="1.2" height="78.90" fill="#fff"/><rect x="327.99" y="0" width="1.2" height="78.90" fill="#fff"/><rect x="338.99" y="0" width="1.2" height="78.90" fill="#fff"/><rect x="350.99" y="0" width="1.2" height="78.90" fill="#fff"/><rect x="361.99" y="0" width="1.2" height="78.90" fill="#fff"/><rect x="373.99" y="0" width="1.2" height="78.90" fill="#fff"/><rect x="379.00" y="0" width="1.6" height="78.90" fill="#d7a4c8"/></svg>
<div class="r" style="left:1092.50px;top:502.60px;width:1.80px;height:96.60px;background:#2aadc0"></div>
<div class="t" style="right:864.40px;text-align:right;top:493.00px;font-size:8.6px;color:#4b4b4b;font-weight:400;">1.2</div>
<div class="r" style="left:739.10px;top:502.50px;width:6.90px;height:1.00px;background:#cfd5e6"></div>
<div class="t" style="right:864.40px;text-align:right;top:525.00px;font-size:8.6px;color:#4b4b4b;font-weight:400;">0.8</div>
<div class="r" style="left:739.10px;top:534.50px;width:6.90px;height:1.00px;background:#cfd5e6"></div>
<div class="t" style="right:864.40px;text-align:right;top:557.00px;font-size:8.6px;color:#4b4b4b;font-weight:400;">0.4</div>
<div class="r" style="left:739.10px;top:566.50px;width:6.90px;height:1.00px;background:#cfd5e6"></div>
<div class="t" style="right:864.40px;text-align:right;top:589.00px;font-size:8.6px;color:#4b4b4b;font-weight:400;">0</div>
<div class="r" style="left:739.10px;top:598.50px;width:6.90px;height:1.00px;background:#cfd5e6"></div>
<div class="r" style="left:784.90px;top:599.20px;width:1.00px;height:5.50px;background:#cfd5e6"></div>
<div class="t" style="left:585.40px;width:400px;text-align:center;top:601.40px;font-size:8.4px;color:#4b4b4b;font-weight:400;">14:00</div>
<div class="r" style="left:880.70px;top:599.20px;width:1.00px;height:5.50px;background:#cfd5e6"></div>
<div class="t" style="left:681.20px;width:400px;text-align:center;top:601.40px;font-size:8.4px;color:#4b4b4b;font-weight:400;">14:30</div>
<div class="r" style="left:977.50px;top:599.20px;width:1.00px;height:5.50px;background:#cfd5e6"></div>
<div class="t" style="left:778.00px;width:400px;text-align:center;top:601.40px;font-size:8.4px;color:#4b4b4b;font-weight:400;">15:00</div>
<div class="r" style="left:1073.50px;top:599.20px;width:1.00px;height:5.50px;background:#cfd5e6"></div>
<div class="t" style="left:874.00px;width:400px;text-align:center;top:601.40px;font-size:8.4px;color:#4b4b4b;font-weight:400;">15:30</div>
<svg class="r" style="left:766.40px;top:629.30px;overflow:visible;" width="10" height="9" viewBox="0 0 10 9"><g fill="#7b3ea6"><rect x="0.5" y="3.5" width="2" height="5"/><rect x="3.8" y="0.5" width="2" height="8"/><rect x="7.1" y="2.2" width="2" height="6.3"/></g></svg>
<div class="t" style="left:780.90px;top:624.30px;font-size:8.6px;color:#4b4b4b;font-weight:400;letter-spacing:-0.35px">10.175.20.60</div>
<svg class="r" style="left:850.40px;top:629.30px;overflow:visible;" width="10" height="9" viewBox="0 0 10 9"><g fill="#fde98e"><rect x="0.5" y="3.5" width="2" height="5"/><rect x="3.8" y="0.5" width="2" height="8"/><rect x="7.1" y="2.2" width="2" height="6.3"/></g></svg>
<div class="t" style="left:865.30px;top:624.30px;font-size:8.6px;color:#4b4b4b;font-weight:400;letter-spacing:-0.35px">10.175.19.39</div>
<svg class="r" style="left:935.00px;top:629.30px;overflow:visible;" width="10" height="9" viewBox="0 0 10 9"><g fill="#3fc6d9"><rect x="0.5" y="3.5" width="2" height="5"/><rect x="3.8" y="0.5" width="2" height="8"/><rect x="7.1" y="2.2" width="2" height="6.3"/></g></svg>
<div class="t" style="left:950.00px;top:624.30px;font-size:8.6px;color:#4b4b4b;font-weight:400;letter-spacing:-0.35px">3.135.160.93</div>
<svg class="r" style="left:1019.00px;top:629.30px;overflow:visible;" width="10" height="9" viewBox="0 0 10 9"><g fill="#dfbff2"><rect x="0.5" y="3.5" width="2" height="5"/><rect x="3.8" y="0.5" width="2" height="8"/><rect x="7.1" y="2.2" width="2" height="6.3"/></g></svg>
<div class="t" style="left:1034.00px;top:624.30px;font-size:8.6px;color:#4b4b4b;font-weight:400;letter-spacing:-0.35px">35.81.148.150</div>
<svg class="r" style="left:766.40px;top:640.50px;overflow:visible;" width="10" height="9" viewBox="0 0 10 9"><g fill="#f0602e"><rect x="0.5" y="3.5" width="2" height="5"/><rect x="3.8" y="0.5" width="2" height="8"/><rect x="7.1" y="2.2" width="2" height="6.3"/></g></svg>
<div class="t" style="left:780.90px;top:635.50px;font-size:8.6px;color:#4b4b4b;font-weight:400;letter-spacing:-0.35px">10.175.10.8</div>
<svg class="r" style="left:850.40px;top:640.50px;overflow:visible;" width="10" height="9" viewBox="0 0 10 9"><g fill="#f5c400"><rect x="0.5" y="3.5" width="2" height="5"/><rect x="3.8" y="0.5" width="2" height="8"/><rect x="7.1" y="2.2" width="2" height="6.3"/></g></svg>
<div class="t" style="left:865.30px;top:635.50px;font-size:8.6px;color:#4b4b4b;font-weight:400;letter-spacing:-0.35px">44.237.169.100</div>
<svg class="r" style="left:935.00px;top:640.50px;overflow:visible;" width="10" height="9" viewBox="0 0 10 9"><g fill="#4e4ad6"><rect x="0.5" y="3.5" width="2" height="5"/><rect x="3.8" y="0.5" width="2" height="8"/><rect x="7.1" y="2.2" width="2" height="6.3"/></g></svg>
<div class="t" style="left:950.00px;top:635.50px;font-size:8.6px;color:#4b4b4b;font-weight:400;letter-spacing:-0.35px">44.221.225.174</div>
<svg class="r" style="left:1019.00px;top:640.50px;overflow:visible;" width="10" height="9" viewBox="0 0 10 9"><g fill="#f59b58"><rect x="0.5" y="3.5" width="2" height="5"/><rect x="3.8" y="0.5" width="2" height="8"/><rect x="7.1" y="2.2" width="2" height="6.3"/></g></svg>
<div class="t" style="left:1034.00px;top:635.50px;font-size:8.6px;color:#4b4b4b;font-weight:400;letter-spacing:-0.35px">10.175.10.7</div>
<svg class="r" style="left:766.40px;top:651.60px;overflow:visible;" width="10" height="9" viewBox="0 0 10 9"><g fill="#a66bd3"><rect x="0.5" y="3.5" width="2" height="5"/><rect x="3.8" y="0.5" width="2" height="8"/><rect x="7.1" y="2.2" width="2" height="6.3"/></g></svg>
<div class="t" style="left:780.90px;top:646.60px;font-size:8.6px;color:#4b4b4b;font-weight:400;letter-spacing:-0.35px">34.234.20.71</div>
<svg class="r" style="left:850.40px;top:651.60px;overflow:visible;" width="10" height="9" viewBox="0 0 10 9"><g fill="#fbc9aa"><rect x="0.5" y="3.5" width="2" height="5"/><rect x="3.8" y="0.5" width="2" height="8"/><rect x="7.1" y="2.2" width="2" height="6.3"/></g></svg>
<div class="t" style="left:865.30px;top:646.60px;font-size:8.6px;color:#4b4b4b;font-weight:400;letter-spacing:-0.35px">10.175.10.36</div>
<div class="t" style="left:1156.00px;top:468.00px;font-size:10.7px;color:#4b4b4b;font-weight:400;">Average requests availability</div>
<svg class="r" style="left:1542.40px;top:467.60px;overflow:visible;" width="23.0" height="23.0" viewBox="0 0 23.0 23.0"><rect x="0.5" y="0.5" width="22.00" height="22.00" rx="2" fill="#fff" stroke="#26a8b9" stroke-width="1.2"/><circle cx="7.10" cy="11.90" r="1.4" fill="#00a1b2"/><circle cx="11.50" cy="11.90" r="1.4" fill="#00a1b2"/><circle cx="15.90" cy="11.90" r="1.4" fill="#00a1b2"/></svg>
<div class="r" style="left:1181.30px;top:534.30px;width:382.40px;height:1.00px;background:#ececec"></div>
<div class="r" style="left:1181.30px;top:566.50px;width:382.40px;height:1.00px;background:#ececec"></div>
<div class="r" style="left:1181.30px;top:502.00px;width:382.40px;height:1.00px;background:#dadada"></div>
<div class="r" style="left:1563.20px;top:502.50px;width:1.00px;height:96.80px;background:#dadada"></div>
<div class="r" style="left:1180.80px;top:502.00px;width:1.00px;height:97.80px;background:#cfd5e6"></div>
<div class="r" style="left:1181.30px;top:598.80px;width:382.40px;height:1.00px;background:#cfd5e6"></div>
<svg class="r" style="left:1181.30px;top:502.50px;overflow:visible;" width="384.4" height="100" viewBox="0 0 384.4 100"><line x1="0" y1="16.5" x2="371.70" y2="16.5" stroke="#b27fc6" stroke-width="1.6"/><circle cx="378.30" cy="16.5" r="3.3" fill="#b27fc6"/><line x1="0" y1="96.3" x2="374.70" y2="96.3" stroke="#f6c8a8" stroke-width="1.5"/><circle cx="378.30" cy="96.3" r="3.3" fill="#fbc9aa"/></svg>
<div class="r" style="left:1526.30px;top:502.50px;width:1.80px;height:96.80px;background:#2aadc0"></div>
<div class="t" style="right:430.00px;text-align:right;top:493.00px;font-size:8.6px;color:#4b4b4b;font-weight:400;">120</div>
<div class="r" style="left:1173.50px;top:502.50px;width:7.80px;height:1.00px;background:#cfd5e6"></div>
<div class="t" style="right:430.00px;text-align:right;top:525.00px;font-size:8.6px;color:#4b4b4b;font-weight:400;">80</div>
<div class="r" style="left:1173.50px;top:534.50px;width:7.80px;height:1.00px;background:#cfd5e6"></div>
<div class="t" style="right:430.00px;text-align:right;top:557.00px;font-size:8.6px;color:#4b4b4b;font-weight:400;">40</div>
<div class="r" style="left:1173.50px;top:566.50px;width:7.80px;height:1.00px;background:#cfd5e6"></div>
<div class="t" style="right:430.00px;text-align:right;top:589.00px;font-size:8.6px;color:#4b4b4b;font-weight:400;">0</div>
<div class="r" style="left:1173.50px;top:598.50px;width:7.80px;height:1.00px;background:#cfd5e6"></div>
<div class="r" style="left:1218.70px;top:599.30px;width:1.00px;height:5.50px;background:#cfd5e6"></div>
<div class="t" style="left:1019.20px;width:400px;text-align:center;top:601.50px;font-size:8.4px;color:#4b4b4b;font-weight:400;">14:00</div>
<div class="r" style="left:1315.50px;top:599.30px;width:1.00px;height:5.50px;background:#cfd5e6"></div>
<div class="t" style="left:1116.00px;width:400px;text-align:center;top:601.50px;font-size:8.4px;color:#4b4b4b;font-weight:400;">14:30</div>
<div class="r" style="left:1411.50px;top:599.30px;width:1.00px;height:5.50px;background:#cfd5e6"></div>
<div class="t" style="left:1212.00px;width:400px;text-align:center;top:601.50px;font-size:8.4px;color:#4b4b4b;font-weight:400;">15:00</div>
<div class="r" style="left:1507.50px;top:599.30px;width:1.00px;height:5.50px;background:#cfd5e6"></div>
<div class="t" style="left:1308.00px;width:400px;text-align:center;top:601.50px;font-size:8.4px;color:#4b4b4b;font-weight:400;">15:30</div>
<svg class="r" style="left:1200.00px;top:629.30px;overflow:visible;" width="10" height="9" viewBox="0 0 10 9"><polyline points="0.8,8 3.5,4.5 5.5,6 9.2,1.5" fill="none" stroke="#7b3ea6" stroke-width="1.5"/></svg>
<div class="t" style="left:1215.00px;top:624.30px;font-size:8.6px;color:#4b4b4b;font-weight:400;letter-spacing:-0.35px">10.175.20.60</div>
<svg class="r" style="left:1284.00px;top:629.30px;overflow:visible;" width="10" height="9" viewBox="0 0 10 9"><polyline points="0.8,8 3.5,4.5 5.5,6 9.2,1.5" fill="none" stroke="#3fc6d9" stroke-width="1.5"/></svg>
<div class="t" style="left:1299.00px;top:624.30px;font-size:8.6px;color:#4b4b4b;font-weight:400;letter-spacing:-0.35px">3.135.160.93</div>
<svg class="r" style="left:1368.50px;top:629.30px;overflow:visible;" width="10" height="9" viewBox="0 0 10 9"><polyline points="0.8,8 3.5,4.5 5.5,6 9.2,1.5" fill="none" stroke="#f5c400" stroke-width="1.5"/></svg>
<div class="t" style="left:1383.70px;top:624.30px;font-size:8.6px;color:#4b4b4b;font-weight:400;letter-spacing:-0.35px">44.237.169.100</div>
<svg class="r" style="left:1452.60px;top:629.30px;overflow:visible;" width="10" height="9" viewBox="0 0 10 9"><polyline points="0.8,8 3.5,4.5 5.5,6 9.2,1.5" fill="none" stroke="#a66bd3" stroke-width="1.5"/></svg>
<div class="t" style="left:1467.50px;top:624.30px;font-size:8.6px;color:#4b4b4b;font-weight:400;letter-spacing:-0.35px">34.234.20.71</div>
<svg class="r" style="left:1200.00px;top:640.50px;overflow:visible;" width="10" height="9" viewBox="0 0 10 9"><polyline points="0.8,8 3.5,4.5 5.5,6 9.2,1.5" fill="none" stroke="#fde98e" stroke-width="1.5"/></svg>
<div class="t" style="left:1215.00px;top:635.50px;font-size:8.6px;color:#4b4b4b;font-weight:400;letter-spacing:-0.35px">10.175.19.39</div>
<svg class="r" style="left:1284.00px;top:640.50px;overflow:visible;" width="10" height="9" viewBox="0 0 10 9"><polyline points="0.8,8 3.5,4.5 5.5,6 9.2,1.5" fill="none" stroke="#dfbff2" stroke-width="1.5"/></svg>
<div class="t" style="left:1299.00px;top:635.50px;font-size:8.6px;color:#4b4b4b;font-weight:400;letter-spacing:-0.35px">35.81.148.150</div>
<svg class="r" style="left:1368.50px;top:640.50px;overflow:visible;" width="10" height="9" viewBox="0 0 10 9"><polyline points="0.8,8 3.5,4.5 5.5,6 9.2,1.5" fill="none" stroke="#f0602e" stroke-width="1.5"/></svg>
<div class="t" style="left:1383.70px;top:635.50px;font-size:8.6px;color:#4b4b4b;font-weight:400;letter-spacing:-0.35px">10.175.10.8</div>
<svg class="r" style="left:1452.60px;top:640.50px;overflow:visible;" width="10" height="9" viewBox="0 0 10 9"><polyline points="0.8,8 3.5,4.5 5.5,6 9.2,1.5" fill="none" stroke="#4e4ad6" stroke-width="1.5"/></svg>
<div class="t" style="left:1467.50px;top:635.50px;font-size:8.6px;color:#4b4b4b;font-weight:400;letter-spacing:-0.35px">44.221.225.174</div>
<svg class="r" style="left:1200.00px;top:651.60px;overflow:visible;" width="10" height="9" viewBox="0 0 10 9"><polyline points="0.8,8 3.5,4.5 5.5,6 9.2,1.5" fill="none" stroke="#f59b58" stroke-width="1.5"/></svg>
<div class="t" style="left:1215.00px;top:646.60px;font-size:8.6px;color:#4b4b4b;font-weight:400;letter-spacing:-0.35px">10.175.10.7</div>
<div class="r" style="left:710.00px;top:688.00px;width:867.70px;height:142.00px;background:#fff;border-radius:2px"></div>
<div class="t" style="left:722.00px;top:700.80px;font-size:15px;color:#393939;font-weight:400;letter-spacing:-0.1px;-webkit-text-stroke:0.4px #393939;">TCP metrics</div>
<svg class="r" style="left:1510.00px;top:700.00px;overflow:visible;" width="23.4" height="22.8" viewBox="0 0 23.4 22.8"><rect x="0.5" y="0.5" width="22.40" height="21.80" rx="2" fill="#fff" stroke="#26a8b9" stroke-width="1.2"/><circle cx="7.30" cy="11.80" r="1.4" fill="#00a1b2"/><circle cx="11.70" cy="11.80" r="1.4" fill="#00a1b2"/><circle cx="16.10" cy="11.80" r="1.4" fill="#00a1b2"/></svg>
<svg class="r" style="left:1548.60px;top:708.00px;overflow:visible;" width="11.5" height="6.1" viewBox="0 0 11.5 6.1"><polyline points="1,5.1 5.75,1 10.5,5.1" fill="none" stroke="#00a1b2" stroke-width="2.2" /></svg>
<div class="t" style="left:721.60px;top:733.70px;font-size:10.7px;color:#4b4b4b;font-weight:400;">Connection time by request</div>
<svg class="r" style="left:1542.60px;top:732.50px;overflow:visible;" width="23.2" height="22.9" viewBox="0 0 23.2 22.9"><rect x="0.5" y="0.5" width="22.20" height="21.90" rx="2" fill="#fff" stroke="#26a8b9" stroke-width="1.2"/><circle cx="7.20" cy="11.85" r="1.4" fill="#00a1b2"/><circle cx="11.60" cy="11.85" r="1.4" fill="#00a1b2"/><circle cx="16.00" cy="11.85" r="1.4" fill="#00a1b2"/></svg>
<div class="r" style="left:758.00px;top:799.00px;width:806.60px;height:1.00px;background:#ececec"></div>
<div class="r" style="left:758.00px;top:766.70px;width:806.60px;height:1.00px;background:#dadada"></div>
<div class="r" style="left:1564.10px;top:767.20px;width:1.00px;height:62.80px;background:#dadada"></div>
<div class="r" style="left:757.50px;top:766.70px;width:1.00px;height:63.30px;background:#cfd5e6"></div>
<div class="t" style="right:853.00px;text-align:right;top:757.40px;font-size:8.6px;color:#4b4b4b;font-weight:400;">60 ms</div>
<div class="r" style="left:750.50px;top:766.90px;width:7.50px;height:1.00px;background:#cfd5e6"></div>
<div class="t" style="right:853.00px;text-align:right;top:789.60px;font-size:8.6px;color:#4b4b4b;font-weight:400;">40 ms</div>
<div class="r" style="left:750.50px;top:799.10px;width:7.50px;height:1.00px;background:#cfd5e6"></div>
<svg class="r" style="left:758.00px;top:760.00px;overflow:visible;" width="806.6" height="40" viewBox="0 0 806.6 40"><polyline points="0.97,24.56 7.38,23.53 13.79,25.07 20.21,23.28 27.90,25.58 34.31,25.33 40.72,24.82 47.13,24.82 53.54,23.53 61.23,25.33 68.92,23.28 75.33,23.02 81.74,25.07 88.15,23.28 95.85,24.82 108.67,24.82 115.08,23.53 121.49,23.28 127.90,25.07 135.59,21.48 142.00,25.84 148.41,23.28 156.10,23.28 162.51,24.56 168.92,23.53 175.33,23.53 183.03,25.33 189.44,25.33 197.13,23.02 204.82,23.79 217.64,25.33 224.05,25.33 230.46,23.53 236.87,23.28 243.28,24.56 250.97,23.02 257.38,24.82 263.79,24.82 276.62,25.07 284.31,23.53 290.72,23.28 298.41,24.82 311.23,24.56 317.64,18.66 324.05,24.56 331.74,20.97 338.15,22.76 350.97,22.76 358.67,25.07 365.08,23.53 371.49,24.82 379.18,22.76 386.87,24.05 394.56,25.07 402.26,25.07 398.56,25.66 411.69,25.13 419.56,20.67 433.99,24.35 447.12,25.13 453.68,23.30 466.80,23.03 473.36,25.13 493.05,24.61 499.61,23.30 507.49,22.77 514.05,25.66 520.61,23.56 528.48,23.56 535.04,20.67 541.61,23.30 549.48,24.08 559.98,23.30 567.85,25.40 574.41,22.77 582.29,24.87 588.85,23.30 601.97,23.03 608.54,25.66 622.97,24.08 641.34,24.87 657.09,25.40 668.90,24.61 675.46,23.03 693.84,25.40 704.34,23.82 725.33,23.03 730.58,23.30 737.14,25.40 743.71,21.72 750.27,25.40 758.14,25.40 764.70,24.61 771.27,25.13 777.83,22.77 784.91,24.61" fill="none" stroke="#7b3ea6" stroke-width="1.9" stroke-linejoin="round"/><circle cx="797.80" cy="23.00" r="3" fill="#7b3ea6"/></svg>
<div class="r" style="left:1487.40px;top:767.20px;width:4.40px;height:62.80px;background:#c9f0f4;border-left:1.2px solid #1aa5b8;border-right:1.2px solid #1aa5b8;box-sizing:border-box"></div>
<svg class="r" style="left:1482.00px;top:777.00px;overflow:visible;" width="12" height="12" viewBox="0 0 12 12"><circle cx="6" cy="6" r="3.8" fill="#7b3ea6"/></svg>
<div class="r" style="left:1253.60px;top:651.40px;width:228.00px;height:120.00px;background:#fff;border:1.6px solid #4cbcc9;border-radius:4px;box-sizing:border-box"></div>
<div class="t" style="left:1263.40px;top:660.20px;font-size:9.8px;color:#4b4b4b;font-weight:400;">2024-06-14, 15:35 - 15:36</div>
<div class="r" style="left:1263.00px;top:685.00px;width:7.00px;height:7.00px;background:#7a38a4"></div>
<div class="t" style="left:1276.00px;top:678.60px;font-size:8.7px;color:#8c8c8c;font-weight:400;letter-spacing:-0.35px">44.237.169.100 | 22</div>
<div class="r" style="left:1347.50px;top:691.00px;width:89.00px;height:1.00px;background:repeating-linear-gradient(to right,#c4c4c4 0,#c4c4c4 1px,transparent 1px,transparent 2px)"></div>
<div class="t" style="right:128.20px;text-align:right;top:678.60px;font-size:9.8px;color:#4b4b4b;font-weight:400;">50.2 ms</div>
<div class="r" style="left:1263.00px;top:705.60px;width:7.00px;height:7.00px;background:#fde98e"></div>
<div class="t" style="left:1276.00px;top:699.20px;font-size:8.7px;color:#8c8c8c;font-weight:400;letter-spacing:-0.35px">34.234.20.71 | 22</div>
<div class="r" style="left:1339.50px;top:711.60px;width:98.50px;height:1.00px;background:repeating-linear-gradient(to right,#c4c4c4 0,#c4c4c4 1px,transparent 1px,transparent 2px)"></div>
<div class="t" style="right:128.20px;text-align:right;top:699.20px;font-size:9.8px;color:#4b4b4b;font-weight:400;">12.6 ms</div>
<div class="r" style="left:1263.00px;top:726.00px;width:7.00px;height:7.00px;background:#45c9da"></div>
<div class="t" style="left:1276.00px;top:719.60px;font-size:8.7px;color:#8c8c8c;font-weight:400;letter-spacing:-0.35px">3.135.160.93 | 22</div>
<div class="r" style="left:1337.50px;top:732.00px;width:103.00px;height:1.00px;background:repeating-linear-gradient(to right,#c4c4c4 0,#c4c4c4 1px,transparent 1px,transparent 2px)"></div>
<div class="t" style="right:128.20px;text-align:right;top:719.60px;font-size:9.8px;color:#4b4b4b;font-weight:400;">689 μs</div>
<div class="r" style="left:1263.00px;top:747.40px;width:7.00px;height:7.00px;background:#dfbff2"></div>
<div class="t" style="left:1276.00px;top:741.00px;font-size:8.7px;color:#8c8c8c;font-weight:400;letter-spacing:-0.35px">10.175.20.60 | 22</div>
<div class="r" style="left:1339.50px;top:753.40px;width:102.50px;height:1.00px;background:repeating-linear-gradient(to right,#c4c4c4 0,#c4c4c4 1px,transparent 1px,transparent 2px)"></div>
<div class="t" style="right:128.20px;text-align:right;top:741.00px;font-size:9.8px;color:#4b4b4b;font-weight:400;">223 μs</div>
</body></html>
